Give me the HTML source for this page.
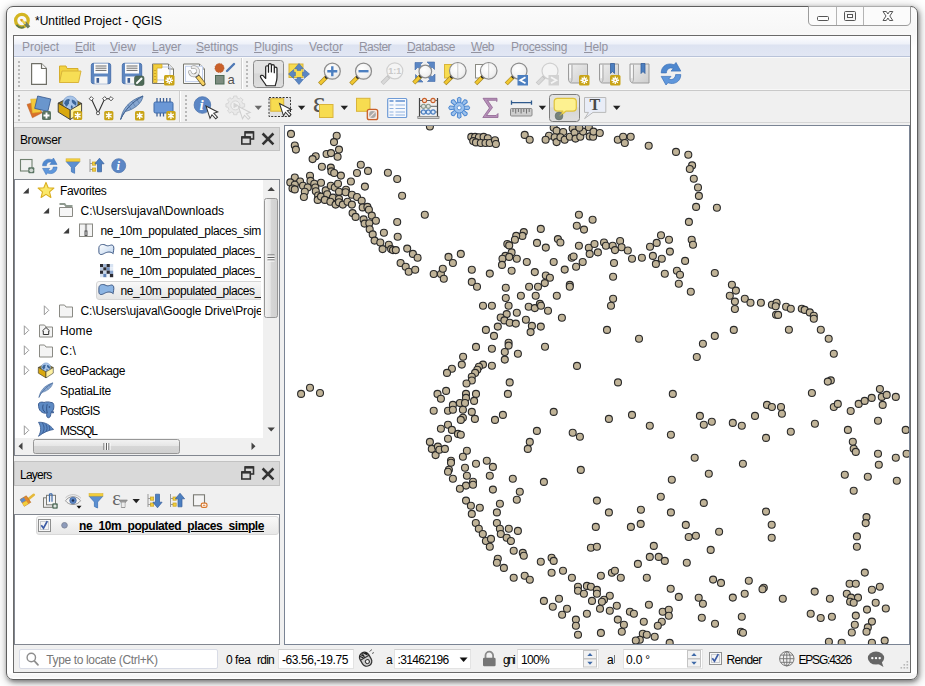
<!DOCTYPE html>
<html>
<head>
<meta charset="utf-8">
<title>*Untitled Project - QGIS</title>
<style>
html,body{margin:0;padding:0;}
body{width:925px;height:686px;background:#fff;overflow:hidden;position:relative;
 font-family:"Liberation Sans",sans-serif;font-size:12px;color:#000;}
.a{position:absolute;}
svg{position:absolute;overflow:visible;}
.t{position:absolute;white-space:nowrap;}
u{text-decoration:underline;text-underline-offset:1px;}

#win{position:absolute;left:6px;top:6px;width:910px;height:672px;border:1px solid #5e5e5e;border-radius:7px;
 background:linear-gradient(180deg,#fbfbfb 0,#f7f7f7 24px,#ffffff 40px,#ffffff 666px,#f4f4f4 669px,#ffffff 672px);
 box-shadow:0 0 0 1px rgba(255,255,255,.6) inset, 1px 2px 4px rgba(0,0,0,.38), 1px 2px 11px rgba(0,0,0,.33);}
#client{position:absolute;left:13px;top:35px;width:896px;height:636px;border:1px solid #6a6a6a;background:#f0f0f0;}
#menubar{position:absolute;left:14px;top:36px;width:896px;height:20px;
 background:linear-gradient(180deg,#fdfdfe 0,#eef1f9 40%,#dde3f1 45%,#e2e7f4 100%);border-bottom:1px solid #b9c3d9;}
.dock{position:absolute;background:#d9d9d9;border:1px solid #c2c2c2;box-sizing:border-box;}
.box{position:absolute;background:#fff;border:1px solid #828790;box-sizing:border-box;}
.inp{position:absolute;background:#fff;border:1px solid #e3e3e3;border-top-color:#d0d0d0;box-sizing:border-box;}
.hl{position:absolute;height:1px;}
.vl{position:absolute;width:1px;}
.grip{position:absolute;width:2px;background:repeating-linear-gradient(180deg,#b9b9b9 0,#b9b9b9 2px,transparent 2px,transparent 4px);}

#dots{overflow:hidden}
</style>
</head>
<body>
<div id="win"></div><div id="client"></div>
<span class="t" id="t0" style="left:35px;top:14.44px;font-size:12px;line-height:14px;color:#000;letter-spacing:0.012px;">*Untitled Project - QGIS</span>
<div id="menubar"></div>
<div class="a" style="left:549px;top:94px;width:31px;height:28px;box-sizing:border-box;border:1px solid #7c7c7c;border-radius:3.5px;background:linear-gradient(180deg,#e3e3e3 0,#e0e0e0 45%,#d6d6d6 50%,#dedede 100%)"></div>
<div class="a" style="left:253px;top:60px;width:31px;height:28px;box-sizing:border-box;border:1px solid #8b8b8b;border-radius:3.5px;background:linear-gradient(180deg,#e3e3e3 0,#e0e0e0 45%,#d6d6d6 50%,#dedede 100%)"></div>
<span class="t" id="t1" style="left:22px;top:40.04px;font-size:12px;line-height:14px;color:#9393a0;letter-spacing:-0.054px;">Pro<u>j</u>ect</span>
<span class="t" id="t2" style="left:75px;top:40.04px;font-size:12px;line-height:14px;color:#9393a0;letter-spacing:-0.176px;"><u>E</u>dit</span>
<span class="t" id="t3" style="left:110px;top:40.04px;font-size:12px;line-height:14px;color:#9393a0;letter-spacing:0.047px;"><u>V</u>iew</span>
<span class="t" id="t4" style="left:152px;top:40.04px;font-size:12px;line-height:14px;color:#9393a0;letter-spacing:-0.206px;"><u>L</u>ayer</span>
<span class="t" id="t5" style="left:196px;top:40.04px;font-size:12px;line-height:14px;color:#9393a0;letter-spacing:-0.172px;"><u>S</u>ettings</span>
<span class="t" id="t6" style="left:254px;top:40.04px;font-size:12px;line-height:14px;color:#9393a0;letter-spacing:-0.054px;"><u>P</u>lugins</span>
<span class="t" id="t7" style="left:309px;top:40.04px;font-size:12px;line-height:14px;color:#9393a0;letter-spacing:-0.008px;">Vect<u>o</u>r</span>
<span class="t" id="t8" style="left:359px;top:40.04px;font-size:12px;line-height:14px;color:#9393a0;letter-spacing:-0.560px;"><u>R</u>aster</span>
<span class="t" id="t9" style="left:407px;top:40.04px;font-size:12px;line-height:14px;color:#9393a0;letter-spacing:-0.422px;"><u>D</u>atabase</span>
<span class="t" id="t10" style="left:471px;top:40.04px;font-size:12px;line-height:14px;color:#9393a0;letter-spacing:-0.490px;"><u>W</u>eb</span>
<span class="t" id="t11" style="left:511px;top:40.04px;font-size:12px;line-height:14px;color:#9393a0;letter-spacing:-0.338px;">Pro<u>c</u>essing</span>
<span class="t" id="t12" style="left:584px;top:40.04px;font-size:12px;line-height:14px;color:#9393a0;letter-spacing:-0.172px;"><u>H</u>elp</span>
<div class="hl" style="left:14px;top:57px;width:896px;background:#fafafa"></div>
<div class="hl" style="left:14px;top:89px;width:896px;background:#f8f8f8"></div>
<div class="hl" style="left:14px;top:90px;width:896px;background:#c9c9c9"></div>
<div class="hl" style="left:14px;top:122px;width:896px;background:#d6d6d6"></div>
<div class="grip" style="left:18px;top:61px;height:26px"></div>
<div class="grip" style="left:246px;top:61px;height:26px"></div>
<div class="grip" style="left:18px;top:95px;height:26px"></div>
<div class="grip" style="left:185px;top:95px;height:26px"></div>
<div class="vl" style="left:241px;top:58px;height:31px;background:#cfcfcf"></div><div class="vl" style="left:242px;top:58px;height:31px;background:#fff"></div>
<div class="vl" style="left:179px;top:91px;height:31px;background:#cfcfcf"></div><div class="vl" style="left:180px;top:91px;height:31px;background:#fff"></div>
<div class="dock" style="left:14px;top:127px;width:266px;height:24px"></div>
<span class="t" id="t13" style="left:20px;top:133.44px;font-size:12px;line-height:14px;color:#000;letter-spacing:-0.431px;">Browser</span>
<div class="box" style="left:14px;top:179px;width:266px;height:277px"></div>
<div class="dock" style="left:14px;top:461px;width:266px;height:25px"></div>
<span class="t" id="t14" style="left:20px;top:468.44px;font-size:12px;line-height:14px;color:#000;letter-spacing:-0.755px;">Layers</span>
<div class="box" style="left:14px;top:514px;width:266px;height:131px"></div>
<div class="a" style="left:15px;top:180px;width:246px;height:258px;overflow:hidden">
<div class="a" style="left:81px;top:101px;width:190px;height:19px;border:1px solid #d6d6d6;border-radius:3px;background:linear-gradient(180deg,#f8f8f8,#e6e6e6);box-sizing:border-box"></div>
<span class="t" id="t15" style="left:45px;top:3.94px;font-size:12px;line-height:14px;color:#000;letter-spacing:-0.318px;">Favorites</span>
<span class="t" id="t16" style="left:65.5px;top:23.94px;font-size:12px;line-height:14px;color:#000;letter-spacing:-0.022px;">C:\Users\ujaval\Downloads</span>
<span class="t" id="t17" style="left:85.5px;top:43.94px;font-size:12px;line-height:14px;color:#000;letter-spacing:-0.332px;">ne_10m_populated_places_simple</span>
<span class="t" id="t18" style="left:105.5px;top:63.94px;font-size:12px;line-height:14px;color:#000;letter-spacing:-0.433px;">ne_10m_populated_places_simple.shp</span>
<span class="t" id="t19" style="left:105.5px;top:83.94px;font-size:12px;line-height:14px;color:#000;letter-spacing:-0.433px;">ne_10m_populated_places_simple.tif</span>
<span class="t" id="t20" style="left:105.5px;top:103.94px;font-size:12px;line-height:14px;color:#000;letter-spacing:-0.433px;">ne_10m_populated_places_simple.gpkg</span>
<span class="t" id="t21" style="left:65.5px;top:123.94px;font-size:12px;line-height:14px;color:#000;letter-spacing:-0.118px;">C:\Users\ujaval\Google Drive\Projects</span>
<span class="t" id="t22" style="left:45px;top:143.94px;font-size:12px;line-height:14px;color:#000;letter-spacing:0.121px;">Home</span>
<span class="t" id="t23" style="left:45px;top:163.94px;font-size:12px;line-height:14px;color:#000;letter-spacing:0.219px;">C:\</span>
<span class="t" id="t24" style="left:45px;top:183.94px;font-size:12px;line-height:14px;color:#000;letter-spacing:-0.439px;">GeoPackage</span>
<span class="t" id="t25" style="left:45px;top:203.94px;font-size:12px;line-height:14px;color:#000;letter-spacing:-0.237px;">SpatiaLite</span>
<span class="t" id="t26" style="left:45px;top:223.94px;font-size:12px;line-height:14px;color:#000;letter-spacing:-0.741px;">PostGIS</span>
<span class="t" id="t27" style="left:45px;top:243.94px;font-size:12px;line-height:14px;color:#000;letter-spacing:-1.003px;">MSSQL</span>
</div>
<div class="a" style="left:36px;top:516px;width:243px;height:19px;border:1px solid #d9d9d9;border-radius:3px;background:linear-gradient(180deg,#f9f9f9,#e8e8e8);box-sizing:border-box"></div>
<span class="t" id="t28" style="left:79px;top:519.44px;font-size:12px;line-height:14px;color:#000;font-weight:bold;letter-spacing:-0.414px;"><u>ne_10m_populated_places_simple</u></span>
<div class="box" id="map" style="left:284px;top:125px;width:626px;height:520px;border-color:#7a8494"></div>
<div class="inp" style="left:19px;top:649px;width:199px;height:20px;border-color:#d9dce6;border-radius:2px"></div>
<span class="t" id="t29" style="left:46.3px;top:653.44px;font-size:12px;line-height:14px;color:#777;letter-spacing:-0.366px;">Type to locate (Ctrl+K)</span>
<span class="t" id="t30" style="left:226px;top:653.44px;font-size:12px;line-height:14px;color:#000;letter-spacing:-0.470px;">0&nbsp;fea</span>
<span class="t" id="t31" style="left:257px;top:653.44px;font-size:12px;line-height:14px;color:#000;letter-spacing:-0.754px;">rdin</span>
<div class="inp" style="left:278px;top:649px;width:76px;height:20px"></div>
<span class="t" id="t32" style="left:282px;top:653.44px;font-size:12px;line-height:14px;color:#000;letter-spacing:-0.415px;">-63.56,-19.75</span>
<span class="t" id="t33" style="left:386px;top:653.44px;font-size:12px;line-height:14px;color:#000;letter-spacing:-0.688px;">a</span>
<div class="inp" style="left:394px;top:649px;width:77px;height:20px"></div>
<span class="t" id="t34" style="left:397.5px;top:653.44px;font-size:12px;line-height:14px;color:#000;letter-spacing:-0.637px;">:31462196</span>
<span class="t" id="t35" style="left:503px;top:653.44px;font-size:12px;line-height:14px;color:#000;letter-spacing:-1.672px;">gni</span>
<div class="inp" style="left:517px;top:649px;width:82px;height:20px"></div>
<span class="t" id="t36" style="left:521px;top:653.44px;font-size:12px;line-height:14px;color:#000;letter-spacing:-0.676px;">100%</span>
<span class="t" id="t37" style="left:607px;top:653.44px;font-size:12px;line-height:14px;color:#000;letter-spacing:-0.688px;">a</span>
<div class="vl" style="left:614px;top:655px;height:8px;background:#777"></div>
<div class="inp" style="left:623px;top:649px;width:80px;height:20px"></div>
<span class="t" id="t38" style="left:626px;top:653.44px;font-size:12px;line-height:14px;color:#000;letter-spacing:-0.166px;">0.0 °</span>
<span class="t" id="t39" style="left:726.6px;top:653.44px;font-size:12px;line-height:14px;color:#000;letter-spacing:-0.727px;">Render</span>
<span class="t" id="t40" style="left:798.5px;top:653.44px;font-size:12px;line-height:14px;color:#000;letter-spacing:-1.208px;">EPSG:4326</span>
<span class="t" id="t44" style="left:312.8px;top:86.85px;font-size:29px;line-height:31px;color:#555;font-family:'Liberation Serif',serif;">ε</span>
<svg id="dots" style="left:285px;top:126px" width="624" height="518" viewBox="285 126 624 518"><g fill="#c0b397" stroke="#2a2a2a" stroke-width="1.1"><circle cx="291.0" cy="133.9" r="3.5"/><circle cx="294.8" cy="145.5" r="3.5"/><circle cx="295.9" cy="149.6" r="3.5"/><circle cx="336.7" cy="135.8" r="3.5"/><circle cx="334.0" cy="142.1" r="3.5"/><circle cx="339.0" cy="149.6" r="3.5"/><circle cx="326.6" cy="154.0" r="3.5"/><circle cx="331.0" cy="153.1" r="3.5"/><circle cx="337.6" cy="156.8" r="3.5"/><circle cx="315.7" cy="156.3" r="3.5"/><circle cx="312.6" cy="159.1" r="3.5"/><circle cx="321.9" cy="166.7" r="3.5"/><circle cx="330.8" cy="167.6" r="3.5"/><circle cx="331.4" cy="171.4" r="3.5"/><circle cx="334.2" cy="173.0" r="3.5"/><circle cx="340.9" cy="175.6" r="3.5"/><circle cx="360.8" cy="164.8" r="3.5"/><circle cx="357.0" cy="173.0" r="3.5"/><circle cx="368.0" cy="170.9" r="3.5"/><circle cx="387.9" cy="172.8" r="3.5"/><circle cx="397.2" cy="179.0" r="3.5"/><circle cx="350.9" cy="181.5" r="3.5"/><circle cx="364.9" cy="186.6" r="3.5"/><circle cx="402.1" cy="195.7" r="3.5"/><circle cx="424.8" cy="214.7" r="3.5"/><circle cx="429.9" cy="126.5" r="3.5"/><circle cx="294.8" cy="177.5" r="3.5"/><circle cx="290.3" cy="182.4" r="3.5"/><circle cx="300.1" cy="181.5" r="3.5"/><circle cx="294.8" cy="184.7" r="3.5"/><circle cx="292.5" cy="188.5" r="3.5"/><circle cx="294.8" cy="189.4" r="3.5"/><circle cx="303.0" cy="185.7" r="3.5"/><circle cx="310.0" cy="175.8" r="3.5"/><circle cx="310.5" cy="180.9" r="3.5"/><circle cx="307.7" cy="187.5" r="3.5"/><circle cx="304.8" cy="191.7" r="3.5"/><circle cx="303.9" cy="197.0" r="3.5"/><circle cx="314.3" cy="183.8" r="3.5"/><circle cx="321.0" cy="182.8" r="3.5"/><circle cx="315.3" cy="187.5" r="3.5"/><circle cx="315.8" cy="191.3" r="3.5"/><circle cx="318.1" cy="195.5" r="3.5"/><circle cx="317.7" cy="199.9" r="3.5"/><circle cx="321.0" cy="196.6" r="3.5"/><circle cx="325.7" cy="190.4" r="3.5"/><circle cx="327.2" cy="194.2" r="3.5"/><circle cx="324.8" cy="199.9" r="3.5"/><circle cx="330.8" cy="185.7" r="3.5"/><circle cx="334.8" cy="187.5" r="3.5"/><circle cx="338.0" cy="183.8" r="3.5"/><circle cx="339.0" cy="191.7" r="3.5"/><circle cx="332.9" cy="197.6" r="3.5"/><circle cx="330.4" cy="201.8" r="3.5"/><circle cx="339.0" cy="198.9" r="3.5"/><circle cx="335.6" cy="204.6" r="3.5"/><circle cx="339.0" cy="202.3" r="3.5"/><circle cx="342.8" cy="204.6" r="3.5"/><circle cx="346.0" cy="189.8" r="3.5"/><circle cx="345.6" cy="192.3" r="3.5"/><circle cx="351.9" cy="194.7" r="3.5"/><circle cx="357.0" cy="197.0" r="3.5"/><circle cx="347.5" cy="201.8" r="3.5"/><circle cx="351.9" cy="204.6" r="3.5"/><circle cx="361.7" cy="200.8" r="3.5"/><circle cx="362.7" cy="207.4" r="3.5"/><circle cx="367.4" cy="206.9" r="3.5"/><circle cx="368.9" cy="209.7" r="3.5"/><circle cx="352.6" cy="213.1" r="3.5"/><circle cx="355.6" cy="216.9" r="3.5"/><circle cx="371.8" cy="215.6" r="3.5"/><circle cx="375.9" cy="220.7" r="3.5"/><circle cx="363.6" cy="219.4" r="3.5"/><circle cx="364.6" cy="223.6" r="3.5"/><circle cx="369.3" cy="223.2" r="3.5"/><circle cx="369.7" cy="229.2" r="3.5"/><circle cx="372.7" cy="234.4" r="3.5"/><circle cx="374.6" cy="240.6" r="3.5"/><circle cx="380.3" cy="242.5" r="3.5"/><circle cx="382.6" cy="249.1" r="3.5"/><circle cx="388.8" cy="244.8" r="3.5"/><circle cx="391.1" cy="249.1" r="3.5"/><circle cx="393.0" cy="250.1" r="3.5"/><circle cx="395.8" cy="250.1" r="3.5"/><circle cx="383.9" cy="232.7" r="3.5"/><circle cx="397.2" cy="222.0" r="3.5"/><circle cx="397.7" cy="236.8" r="3.5"/><circle cx="407.2" cy="248.6" r="3.5"/><circle cx="412.9" cy="253.9" r="3.5"/><circle cx="417.6" cy="257.8" r="3.5"/><circle cx="471.3" cy="136.9" r="3.5"/><circle cx="475.1" cy="136.9" r="3.5"/><circle cx="478.9" cy="137.3" r="3.5"/><circle cx="483.6" cy="136.9" r="3.5"/><circle cx="487.8" cy="138.3" r="3.5"/><circle cx="473.2" cy="141.1" r="3.5"/><circle cx="476.0" cy="142.4" r="3.5"/><circle cx="480.8" cy="143.0" r="3.5"/><circle cx="485.5" cy="143.0" r="3.5"/><circle cx="489.7" cy="143.0" r="3.5"/><circle cx="495.0" cy="140.2" r="3.5"/><circle cx="495.9" cy="144.0" r="3.5"/><circle cx="524.7" cy="134.9" r="3.5"/><circle cx="529.7" cy="139.8" r="3.5"/><circle cx="549.0" cy="135.8" r="3.5"/><circle cx="545.6" cy="139.8" r="3.5"/><circle cx="553.7" cy="127.8" r="3.5"/><circle cx="556.6" cy="130.7" r="3.5"/><circle cx="563.2" cy="132.0" r="3.5"/><circle cx="554.7" cy="137.3" r="3.5"/><circle cx="556.6" cy="142.1" r="3.5"/><circle cx="560.4" cy="137.3" r="3.5"/><circle cx="564.7" cy="139.8" r="3.5"/><circle cx="569.8" cy="136.8" r="3.5"/><circle cx="572.7" cy="128.4" r="3.5"/><circle cx="574.6" cy="132.6" r="3.5"/><circle cx="575.5" cy="138.6" r="3.5"/><circle cx="580.3" cy="136.8" r="3.5"/><circle cx="583.1" cy="131.6" r="3.5"/><circle cx="588.8" cy="127.3" r="3.5"/><circle cx="589.7" cy="136.4" r="3.5"/><circle cx="593.1" cy="136.8" r="3.5"/><circle cx="579.3" cy="127.8" r="3.5"/><circle cx="593.5" cy="131.6" r="3.5"/><circle cx="578.9" cy="214.7" r="3.5"/><circle cx="592.6" cy="219.8" r="3.5"/><circle cx="576.8" cy="225.8" r="3.5"/><circle cx="584.0" cy="229.6" r="3.5"/><circle cx="540.8" cy="228.9" r="3.5"/><circle cx="523.8" cy="232.1" r="3.5"/><circle cx="522.4" cy="235.9" r="3.5"/><circle cx="516.2" cy="235.9" r="3.5"/><circle cx="514.9" cy="239.7" r="3.5"/><circle cx="507.3" cy="244.0" r="3.5"/><circle cx="509.2" cy="245.4" r="3.5"/><circle cx="537.0" cy="242.9" r="3.5"/><circle cx="545.8" cy="247.6" r="3.5"/><circle cx="557.9" cy="239.1" r="3.5"/><circle cx="560.4" cy="242.5" r="3.5"/><circle cx="578.9" cy="245.7" r="3.5"/><circle cx="588.8" cy="247.8" r="3.5"/><circle cx="594.5" cy="244.0" r="3.5"/><circle cx="460.8" cy="253.9" r="3.5"/><circle cx="448.5" cy="256.9" r="3.5"/><circle cx="505.4" cy="255.9" r="3.5"/><circle cx="511.6" cy="252.4" r="3.5"/><circle cx="571.7" cy="257.8" r="3.5"/><circle cx="589.7" cy="253.9" r="3.5"/><circle cx="599.8" cy="133.0" r="3.5"/><circle cx="617.8" cy="139.8" r="3.5"/><circle cx="623.1" cy="136.8" r="3.5"/><circle cx="630.7" cy="136.8" r="3.5"/><circle cx="624.8" cy="143.0" r="3.5"/><circle cx="648.7" cy="145.8" r="3.5"/><circle cx="676.0" cy="151.9" r="3.5"/><circle cx="688.3" cy="154.8" r="3.5"/><circle cx="692.1" cy="165.4" r="3.5"/><circle cx="689.8" cy="169.0" r="3.5"/><circle cx="693.8" cy="178.8" r="3.5"/><circle cx="698.0" cy="187.5" r="3.5"/><circle cx="698.9" cy="195.9" r="3.5"/><circle cx="696.1" cy="206.9" r="3.5"/><circle cx="716.9" cy="207.8" r="3.5"/><circle cx="688.9" cy="221.9" r="3.5"/><circle cx="661.0" cy="235.3" r="3.5"/><circle cx="669.0" cy="239.7" r="3.5"/><circle cx="656.7" cy="242.9" r="3.5"/><circle cx="650.0" cy="246.7" r="3.5"/><circle cx="691.7" cy="239.7" r="3.5"/><circle cx="693.0" cy="244.8" r="3.5"/><circle cx="669.9" cy="251.6" r="3.5"/><circle cx="652.9" cy="255.9" r="3.5"/><circle cx="641.9" cy="257.8" r="3.5"/><circle cx="604.0" cy="242.5" r="3.5"/><circle cx="605.9" cy="245.7" r="3.5"/><circle cx="612.7" cy="245.7" r="3.5"/><circle cx="620.1" cy="241.0" r="3.5"/><circle cx="621.6" cy="247.3" r="3.5"/><circle cx="615.0" cy="250.1" r="3.5"/><circle cx="627.8" cy="250.5" r="3.5"/><circle cx="597.9" cy="252.4" r="3.5"/><circle cx="400.6" cy="263.0" r="3.5"/><circle cx="405.7" cy="266.8" r="3.5"/><circle cx="408.7" cy="271.7" r="3.5"/><circle cx="415.2" cy="269.8" r="3.5"/><circle cx="433.7" cy="274.0" r="3.5"/><circle cx="440.9" cy="274.0" r="3.5"/><circle cx="442.8" cy="268.8" r="3.5"/><circle cx="310.0" cy="387.8" r="3.5"/><circle cx="452.9" cy="263.0" r="3.5"/><circle cx="443.8" cy="278.7" r="3.5"/><circle cx="471.8" cy="269.8" r="3.5"/><circle cx="489.8" cy="273.6" r="3.5"/><circle cx="471.8" cy="281.9" r="3.5"/><circle cx="477.0" cy="286.8" r="3.5"/><circle cx="502.5" cy="258.8" r="3.5"/><circle cx="509.2" cy="256.9" r="3.5"/><circle cx="516.8" cy="258.8" r="3.5"/><circle cx="502.0" cy="264.9" r="3.5"/><circle cx="526.8" cy="262.0" r="3.5"/><circle cx="511.6" cy="270.7" r="3.5"/><circle cx="534.8" cy="272.1" r="3.5"/><circle cx="553.7" cy="262.0" r="3.5"/><circle cx="564.7" cy="269.6" r="3.5"/><circle cx="573.6" cy="256.5" r="3.5"/><circle cx="576.1" cy="266.8" r="3.5"/><circle cx="582.7" cy="262.0" r="3.5"/><circle cx="545.8" cy="275.5" r="3.5"/><circle cx="549.9" cy="277.7" r="3.5"/><circle cx="544.8" cy="283.1" r="3.5"/><circle cx="529.1" cy="286.8" r="3.5"/><circle cx="538.0" cy="286.8" r="3.5"/><circle cx="569.8" cy="284.9" r="3.5"/><circle cx="569.8" cy="286.8" r="3.5"/><circle cx="505.8" cy="287.8" r="3.5"/><circle cx="520.9" cy="295.8" r="3.5"/><circle cx="535.7" cy="295.8" r="3.5"/><circle cx="556.8" cy="295.8" r="3.5"/><circle cx="505.8" cy="298.0" r="3.5"/><circle cx="483.0" cy="305.8" r="3.5"/><circle cx="491.9" cy="305.8" r="3.5"/><circle cx="508.6" cy="305.8" r="3.5"/><circle cx="528.7" cy="306.7" r="3.5"/><circle cx="534.8" cy="308.1" r="3.5"/><circle cx="539.9" cy="303.9" r="3.5"/><circle cx="541.0" cy="305.8" r="3.5"/><circle cx="548.0" cy="310.7" r="3.5"/><circle cx="516.8" cy="312.8" r="3.5"/><circle cx="506.7" cy="314.1" r="3.5"/><circle cx="500.7" cy="317.5" r="3.5"/><circle cx="504.4" cy="320.4" r="3.5"/><circle cx="509.7" cy="322.7" r="3.5"/><circle cx="515.8" cy="323.6" r="3.5"/><circle cx="525.9" cy="319.8" r="3.5"/><circle cx="531.9" cy="325.9" r="3.5"/><circle cx="540.8" cy="326.6" r="3.5"/><circle cx="561.9" cy="317.7" r="3.5"/><circle cx="530.6" cy="332.1" r="3.5"/><circle cx="497.8" cy="326.6" r="3.5"/><circle cx="485.9" cy="329.9" r="3.5"/><circle cx="494.0" cy="335.9" r="3.5"/><circle cx="508.6" cy="342.8" r="3.5"/><circle cx="508.6" cy="345.6" r="3.5"/><circle cx="476.0" cy="346.9" r="3.5"/><circle cx="491.9" cy="348.8" r="3.5"/><circle cx="504.8" cy="352.0" r="3.5"/><circle cx="517.9" cy="353.7" r="3.5"/><circle cx="545.0" cy="346.7" r="3.5"/><circle cx="504.8" cy="359.6" r="3.5"/><circle cx="463.1" cy="356.8" r="3.5"/><circle cx="461.8" cy="364.6" r="3.5"/><circle cx="483.0" cy="364.6" r="3.5"/><circle cx="491.9" cy="365.7" r="3.5"/><circle cx="478.9" cy="366.8" r="3.5"/><circle cx="477.3" cy="369.7" r="3.5"/><circle cx="475.1" cy="372.9" r="3.5"/><circle cx="471.8" cy="376.7" r="3.5"/><circle cx="471.8" cy="380.5" r="3.5"/><circle cx="466.5" cy="383.5" r="3.5"/><circle cx="451.9" cy="368.7" r="3.5"/><circle cx="447.0" cy="372.9" r="3.5"/><circle cx="577.0" cy="365.9" r="3.5"/><circle cx="509.7" cy="382.4" r="3.5"/><circle cx="614.0" cy="263.0" r="3.5"/><circle cx="632.0" cy="258.8" r="3.5"/><circle cx="661.8" cy="258.8" r="3.5"/><circle cx="655.9" cy="263.9" r="3.5"/><circle cx="685.1" cy="260.9" r="3.5"/><circle cx="613.1" cy="276.8" r="3.5"/><circle cx="664.8" cy="273.8" r="3.5"/><circle cx="676.9" cy="270.7" r="3.5"/><circle cx="680.0" cy="274.7" r="3.5"/><circle cx="678.8" cy="283.8" r="3.5"/><circle cx="690.8" cy="291.8" r="3.5"/><circle cx="714.8" cy="273.0" r="3.5"/><circle cx="731.9" cy="284.8" r="3.5"/><circle cx="735.9" cy="290.6" r="3.5"/><circle cx="729.8" cy="295.8" r="3.5"/><circle cx="734.9" cy="301.6" r="3.5"/><circle cx="734.9" cy="309.0" r="3.5"/><circle cx="744.8" cy="298.8" r="3.5"/><circle cx="750.5" cy="302.8" r="3.5"/><circle cx="613.1" cy="298.8" r="3.5"/><circle cx="611.0" cy="305.8" r="3.5"/><circle cx="607.0" cy="329.9" r="3.5"/><circle cx="639.0" cy="338.8" r="3.5"/><circle cx="733.8" cy="329.9" r="3.5"/><circle cx="714.8" cy="335.9" r="3.5"/><circle cx="702.9" cy="343.7" r="3.5"/><circle cx="696.8" cy="357.0" r="3.5"/><circle cx="618.0" cy="382.4" r="3.5"/><circle cx="760.9" cy="302.7" r="3.5"/><circle cx="771.9" cy="304.8" r="3.5"/><circle cx="776.6" cy="302.7" r="3.5"/><circle cx="775.7" cy="306.2" r="3.5"/><circle cx="776.1" cy="314.7" r="3.5"/><circle cx="778.1" cy="314.9" r="3.5"/><circle cx="786.1" cy="306.7" r="3.5"/><circle cx="790.8" cy="308.8" r="3.5"/><circle cx="801.8" cy="308.8" r="3.5"/><circle cx="804.7" cy="309.9" r="3.5"/><circle cx="809.8" cy="312.4" r="3.5"/><circle cx="813.8" cy="315.8" r="3.5"/><circle cx="813.8" cy="318.8" r="3.5"/><circle cx="788.9" cy="329.8" r="3.5"/><circle cx="820.8" cy="329.8" r="3.5"/><circle cx="828.7" cy="338.7" r="3.5"/><circle cx="833.8" cy="353.7" r="3.5"/><circle cx="830.8" cy="380.4" r="3.5"/><circle cx="827.8" cy="381.6" r="3.5"/><circle cx="879.9" cy="389.0" r="3.5"/><circle cx="301.1" cy="393.9" r="3.5"/><circle cx="320.0" cy="393.0" r="3.5"/><circle cx="437.5" cy="393.9" r="3.5"/><circle cx="440.9" cy="398.8" r="3.5"/><circle cx="433.7" cy="410.8" r="3.5"/><circle cx="440.9" cy="428.8" r="3.5"/><circle cx="429.9" cy="441.9" r="3.5"/><circle cx="431.8" cy="448.9" r="3.5"/><circle cx="435.6" cy="455.1" r="3.5"/><circle cx="437.9" cy="446.6" r="3.5"/><circle cx="439.4" cy="449.8" r="3.5"/><circle cx="446.1" cy="390.9" r="3.5"/><circle cx="466.0" cy="393.9" r="3.5"/><circle cx="476.0" cy="393.9" r="3.5"/><circle cx="466.0" cy="397.9" r="3.5"/><circle cx="474.1" cy="400.9" r="3.5"/><circle cx="459.9" cy="403.0" r="3.5"/><circle cx="465.0" cy="403.0" r="3.5"/><circle cx="452.9" cy="404.9" r="3.5"/><circle cx="448.0" cy="410.8" r="3.5"/><circle cx="452.9" cy="409.8" r="3.5"/><circle cx="462.9" cy="409.8" r="3.5"/><circle cx="471.8" cy="411.9" r="3.5"/><circle cx="462.9" cy="417.8" r="3.5"/><circle cx="460.8" cy="419.9" r="3.5"/><circle cx="474.9" cy="418.9" r="3.5"/><circle cx="448.0" cy="424.8" r="3.5"/><circle cx="451.9" cy="429.9" r="3.5"/><circle cx="458.0" cy="433.9" r="3.5"/><circle cx="460.8" cy="434.8" r="3.5"/><circle cx="448.0" cy="438.8" r="3.5"/><circle cx="444.9" cy="448.9" r="3.5"/><circle cx="466.9" cy="450.8" r="3.5"/><circle cx="462.9" cy="456.8" r="3.5"/><circle cx="451.0" cy="460.8" r="3.5"/><circle cx="451.0" cy="462.7" r="3.5"/><circle cx="448.9" cy="469.7" r="3.5"/><circle cx="448.0" cy="471.8" r="3.5"/><circle cx="452.9" cy="478.8" r="3.5"/><circle cx="476.0" cy="463.8" r="3.5"/><circle cx="465.0" cy="467.8" r="3.5"/><circle cx="466.9" cy="475.8" r="3.5"/><circle cx="486.8" cy="460.8" r="3.5"/><circle cx="492.9" cy="466.9" r="3.5"/><circle cx="489.8" cy="475.8" r="3.5"/><circle cx="473.0" cy="481.7" r="3.5"/><circle cx="473.0" cy="484.7" r="3.5"/><circle cx="466.0" cy="485.6" r="3.5"/><circle cx="459.9" cy="488.7" r="3.5"/><circle cx="492.9" cy="489.6" r="3.5"/><circle cx="466.0" cy="500.6" r="3.5"/><circle cx="470.9" cy="505.7" r="3.5"/><circle cx="479.8" cy="507.8" r="3.5"/><circle cx="499.9" cy="503.8" r="3.5"/><circle cx="471.8" cy="513.9" r="3.5"/><circle cx="496.9" cy="512.4" r="3.5"/><circle cx="512.8" cy="478.8" r="3.5"/><circle cx="519.8" cy="491.7" r="3.5"/><circle cx="516.8" cy="499.7" r="3.5"/><circle cx="543.9" cy="481.9" r="3.5"/><circle cx="580.8" cy="469.9" r="3.5"/><circle cx="527.8" cy="448.9" r="3.5"/><circle cx="529.8" cy="441.9" r="3.5"/><circle cx="536.9" cy="430.9" r="3.5"/><circle cx="495.0" cy="419.9" r="3.5"/><circle cx="502.9" cy="414.9" r="3.5"/><circle cx="507.9" cy="393.9" r="3.5"/><circle cx="553.7" cy="411.9" r="3.5"/><circle cx="572.7" cy="432.8" r="3.5"/><circle cx="579.9" cy="436.7" r="3.5"/><circle cx="596.9" cy="500.6" r="3.5"/><circle cx="672.8" cy="393.9" r="3.5"/><circle cx="608.9" cy="418.9" r="3.5"/><circle cx="632.0" cy="414.9" r="3.5"/><circle cx="649.8" cy="425.8" r="3.5"/><circle cx="670.9" cy="434.8" r="3.5"/><circle cx="699.9" cy="415.9" r="3.5"/><circle cx="703.8" cy="424.8" r="3.5"/><circle cx="711.8" cy="421.8" r="3.5"/><circle cx="732.8" cy="422.9" r="3.5"/><circle cx="741.8" cy="425.8" r="3.5"/><circle cx="755.0" cy="415.9" r="3.5"/><circle cx="694.7" cy="457.8" r="3.5"/><circle cx="742.9" cy="463.8" r="3.5"/><circle cx="708.8" cy="473.7" r="3.5"/><circle cx="671.8" cy="479.8" r="3.5"/><circle cx="660.8" cy="496.8" r="3.5"/><circle cx="703.8" cy="502.9" r="3.5"/><circle cx="608.9" cy="512.4" r="3.5"/><circle cx="640.9" cy="509.7" r="3.5"/><circle cx="670.9" cy="512.4" r="3.5"/><circle cx="811.9" cy="393.0" r="3.5"/><circle cx="767.0" cy="404.9" r="3.5"/><circle cx="771.9" cy="407.0" r="3.5"/><circle cx="781.0" cy="407.0" r="3.5"/><circle cx="781.9" cy="413.8" r="3.5"/><circle cx="814.9" cy="423.8" r="3.5"/><circle cx="790.8" cy="431.8" r="3.5"/><circle cx="766.0" cy="437.9" r="3.5"/><circle cx="833.8" cy="407.0" r="3.5"/><circle cx="837.8" cy="403.9" r="3.5"/><circle cx="850.7" cy="411.0" r="3.5"/><circle cx="858.7" cy="403.9" r="3.5"/><circle cx="864.7" cy="400.9" r="3.5"/><circle cx="871.7" cy="397.9" r="3.5"/><circle cx="881.8" cy="396.9" r="3.5"/><circle cx="886.7" cy="394.9" r="3.5"/><circle cx="895.8" cy="396.9" r="3.5"/><circle cx="882.7" cy="404.9" r="3.5"/><circle cx="878.0" cy="420.8" r="3.5"/><circle cx="847.9" cy="429.9" r="3.5"/><circle cx="905.7" cy="429.9" r="3.5"/><circle cx="852.8" cy="441.8" r="3.5"/><circle cx="853.7" cy="448.8" r="3.5"/><circle cx="855.8" cy="451.9" r="3.5"/><circle cx="878.0" cy="453.8" r="3.5"/><circle cx="895.8" cy="457.8" r="3.5"/><circle cx="906.6" cy="453.8" r="3.5"/><circle cx="878.8" cy="464.8" r="3.5"/><circle cx="844.8" cy="474.8" r="3.5"/><circle cx="867.8" cy="476.7" r="3.5"/><circle cx="896.8" cy="480.7" r="3.5"/><circle cx="853.7" cy="490.7" r="3.5"/><circle cx="766.0" cy="511.6" r="3.5"/><circle cx="866.5" cy="517.1" r="3.5"/><circle cx="475.8" cy="523.0" r="3.5"/><circle cx="478.8" cy="528.8" r="3.5"/><circle cx="482.8" cy="534.0" r="3.5"/><circle cx="485.9" cy="541.0" r="3.5"/><circle cx="491.0" cy="538.9" r="3.5"/><circle cx="489.8" cy="546.8" r="3.5"/><circle cx="496.9" cy="523.0" r="3.5"/><circle cx="499.9" cy="528.8" r="3.5"/><circle cx="500.8" cy="534.0" r="3.5"/><circle cx="508.8" cy="528.8" r="3.5"/><circle cx="517.9" cy="530.9" r="3.5"/><circle cx="506.7" cy="537.7" r="3.5"/><circle cx="510.9" cy="541.0" r="3.5"/><circle cx="513.7" cy="550.8" r="3.5"/><circle cx="522.8" cy="552.9" r="3.5"/><circle cx="523.8" cy="555.8" r="3.5"/><circle cx="497.8" cy="558.8" r="3.5"/><circle cx="496.9" cy="562.8" r="3.5"/><circle cx="503.9" cy="567.9" r="3.5"/><circle cx="513.7" cy="577.7" r="3.5"/><circle cx="524.7" cy="575.8" r="3.5"/><circle cx="529.8" cy="579.8" r="3.5"/><circle cx="540.8" cy="561.8" r="3.5"/><circle cx="551.6" cy="557.8" r="3.5"/><circle cx="553.7" cy="560.9" r="3.5"/><circle cx="551.6" cy="572.8" r="3.5"/><circle cx="543.9" cy="600.9" r="3.5"/><circle cx="552.8" cy="606.7" r="3.5"/><circle cx="559.0" cy="598.8" r="3.5"/><circle cx="595.8" cy="526.9" r="3.5"/><circle cx="630.9" cy="526.9" r="3.5"/><circle cx="640.7" cy="523.9" r="3.5"/><circle cx="685.8" cy="524.9" r="3.5"/><circle cx="688.7" cy="537.0" r="3.5"/><circle cx="695.9" cy="535.8" r="3.5"/><circle cx="590.9" cy="547.8" r="3.5"/><circle cx="596.9" cy="546.8" r="3.5"/><circle cx="653.8" cy="545.9" r="3.5"/><circle cx="649.8" cy="556.9" r="3.5"/><circle cx="658.7" cy="556.9" r="3.5"/><circle cx="664.8" cy="560.9" r="3.5"/><circle cx="637.9" cy="563.9" r="3.5"/><circle cx="686.8" cy="562.8" r="3.5"/><circle cx="710.7" cy="549.9" r="3.5"/><circle cx="563.0" cy="570.7" r="3.5"/><circle cx="571.9" cy="577.7" r="3.5"/><circle cx="600.9" cy="575.8" r="3.5"/><circle cx="611.9" cy="572.8" r="3.5"/><circle cx="614.9" cy="570.7" r="3.5"/><circle cx="620.8" cy="577.7" r="3.5"/><circle cx="646.8" cy="577.7" r="3.5"/><circle cx="713.1" cy="579.6" r="3.5"/><circle cx="578.0" cy="586.8" r="3.5"/><circle cx="578.0" cy="590.8" r="3.5"/><circle cx="586.9" cy="585.9" r="3.5"/><circle cx="590.9" cy="586.8" r="3.5"/><circle cx="596.9" cy="589.9" r="3.5"/><circle cx="596.9" cy="593.8" r="3.5"/><circle cx="583.9" cy="593.8" r="3.5"/><circle cx="609.8" cy="595.7" r="3.5"/><circle cx="604.0" cy="599.7" r="3.5"/><circle cx="601.9" cy="601.8" r="3.5"/><circle cx="592.0" cy="600.9" r="3.5"/><circle cx="600.0" cy="608.8" r="3.5"/><circle cx="616.8" cy="605.8" r="3.5"/><circle cx="609.8" cy="610.7" r="3.5"/><circle cx="567.0" cy="608.8" r="3.5"/><circle cx="562.1" cy="614.7" r="3.5"/><circle cx="586.9" cy="613.7" r="3.5"/><circle cx="575.9" cy="619.6" r="3.5"/><circle cx="575.9" cy="625.7" r="3.5"/><circle cx="578.0" cy="634.8" r="3.5"/><circle cx="600.9" cy="632.9" r="3.5"/><circle cx="617.8" cy="619.6" r="3.5"/><circle cx="623.9" cy="624.7" r="3.5"/><circle cx="621.8" cy="631.8" r="3.5"/><circle cx="629.9" cy="611.7" r="3.5"/><circle cx="633.9" cy="613.7" r="3.5"/><circle cx="648.9" cy="604.8" r="3.5"/><circle cx="643.8" cy="621.7" r="3.5"/><circle cx="670.7" cy="588.7" r="3.5"/><circle cx="678.8" cy="596.9" r="3.5"/><circle cx="698.7" cy="597.8" r="3.5"/><circle cx="702.9" cy="603.7" r="3.5"/><circle cx="701.8" cy="617.7" r="3.5"/><circle cx="715.0" cy="623.7" r="3.5"/><circle cx="662.7" cy="611.7" r="3.5"/><circle cx="668.8" cy="609.8" r="3.5"/><circle cx="668.8" cy="615.8" r="3.5"/><circle cx="661.8" cy="621.7" r="3.5"/><circle cx="657.8" cy="625.7" r="3.5"/><circle cx="642.8" cy="633.8" r="3.5"/><circle cx="646.8" cy="634.8" r="3.5"/><circle cx="654.7" cy="636.7" r="3.5"/><circle cx="639.8" cy="639.7" r="3.5"/><circle cx="635.8" cy="640.5" r="3.5"/><circle cx="669.7" cy="642.9" r="3.5"/><circle cx="719.1" cy="531.7" r="3.5"/><circle cx="771.7" cy="524.8" r="3.5"/><circle cx="771.7" cy="537.7" r="3.5"/><circle cx="865.7" cy="523.1" r="3.5"/><circle cx="856.9" cy="536.4" r="3.5"/><circle cx="856.9" cy="546.7" r="3.5"/><circle cx="864.8" cy="572.6" r="3.5"/><circle cx="721.0" cy="582.9" r="3.5"/><circle cx="748.8" cy="580.7" r="3.5"/><circle cx="763.8" cy="587.8" r="3.5"/><circle cx="762.5" cy="589.3" r="3.5"/><circle cx="744.7" cy="593.8" r="3.5"/><circle cx="732.8" cy="597.6" r="3.5"/><circle cx="782.8" cy="598.7" r="3.5"/><circle cx="741.8" cy="616.7" r="3.5"/><circle cx="740.9" cy="631.7" r="3.5"/><circle cx="743.0" cy="632.7" r="3.5"/><circle cx="814.7" cy="591.6" r="3.5"/><circle cx="829.9" cy="598.7" r="3.5"/><circle cx="810.7" cy="613.7" r="3.5"/><circle cx="820.7" cy="618.0" r="3.5"/><circle cx="831.9" cy="616.7" r="3.5"/><circle cx="849.6" cy="583.7" r="3.5"/><circle cx="855.8" cy="583.7" r="3.5"/><circle cx="846.8" cy="593.8" r="3.5"/><circle cx="851.1" cy="597.6" r="3.5"/><circle cx="858.0" cy="597.6" r="3.5"/><circle cx="850.1" cy="601.7" r="3.5"/><circle cx="853.7" cy="602.8" r="3.5"/><circle cx="871.9" cy="589.7" r="3.5"/><circle cx="879.8" cy="586.7" r="3.5"/><circle cx="875.7" cy="602.8" r="3.5"/><circle cx="885.8" cy="608.5" r="3.5"/><circle cx="867.0" cy="609.6" r="3.5"/><circle cx="855.8" cy="615.6" r="3.5"/><circle cx="871.9" cy="621.6" r="3.5"/><circle cx="854.8" cy="624.8" r="3.5"/><circle cx="867.8" cy="627.4" r="3.5"/><circle cx="866.5" cy="631.7" r="3.5"/><circle cx="851.8" cy="632.5" r="3.5"/><circle cx="828.9" cy="641.7" r="3.5"/><circle cx="841.7" cy="642.8" r="3.5"/><circle cx="871.9" cy="642.8" r="3.5"/><circle cx="884.7" cy="640.6" r="3.5"/></g></svg>
<svg id="ico" style="left:0;top:0" width="925" height="686" viewBox="0 0 925 686"><g transform="translate(39,73.5)"><path d="M-7.4,-9.9 H2.5 L7.4,-5 V10.9 H-7.4 Z" fill="#fff" stroke="#6f6f67" stroke-width="1.2" stroke-linejoin="round"/><path d="M2.5,-9.9 V-5 H7.4" fill="#f4f4f4" stroke="#6f6f67" stroke-width="1.2" stroke-linejoin="round"/></g><g transform="translate(70,73.5)"><path d="M-10.5,9 V-7.5 H-4 L-3,-5 H8 V-2" fill="#f3d340" stroke="#d6ae2c" stroke-width="1"/><path d="M-10.5,9 L-8,-2.5 H11 L8.5,9 Z" fill="#f7de55" stroke="#d9b43a" stroke-width="1"/></g><g transform="translate(101,73.5)"><rect x="-9.7" y="-10.2" width="19.4" height="20.4" rx="2.2" fill="#5d86c0" stroke="#4a72ad" stroke-width="1"/><rect x="-7" y="-10" width="14" height="10" fill="#fbfbfb"/><path d="M-5.5,-7.5 H5.5 M-5.5,-5.3 H5.5 M-5.5,-3.1 H5.5" stroke="#5a5a5a" stroke-width=".9"/><rect x="-6.5" y="3" width="13" height="7.3" fill="#f6f6f6"/><rect x="-4.5" y="4.5" width="2.6" height="4.8" fill="#3e5f95"/></g><g transform="translate(132,73.5)"><rect x="-9.7" y="-10.2" width="19.4" height="20.4" rx="2.2" fill="#5d86c0" stroke="#4a72ad" stroke-width="1"/><rect x="-7" y="-10" width="14" height="10" fill="#fbfbfb"/><path d="M-5.5,-7.5 H5.5 M-5.5,-5.3 H5.5 M-5.5,-3.1 H5.5" stroke="#5a5a5a" stroke-width=".9"/><rect x="-6.5" y="3" width="13" height="7.3" fill="#f6f6f6"/><rect x="-4.5" y="4.5" width="2.6" height="4.8" fill="#3e5f95"/><rect x="2.5" y="2.5" width="9.5" height="9.5" rx="2" fill="#4e6a57" stroke="#3f5747" stroke-width=".6"/><path d="M5,9.5 L9.5,5" stroke="#fff" stroke-width="2" stroke-linecap="round"/></g><g transform="translate(163,73.5)"><path d="M-10.5,-9.5 H5.5 L10.5,-4.5 V10 H-10.5 Z" fill="#fcfcfc" stroke="#77776f" stroke-width="1"/><path d="M5.5,-9.5 V-4.5 H10.5" fill="#eee" stroke="#77776f" stroke-width="1"/><rect x="-7" y="-6.5" width="14" height="13" fill="none" stroke="#b9c6e6" stroke-width="1"/><path d="M-9.5,-9 H-1 V-5.5 H-6 V9 H-9.5 Z" fill="#f2cf3c" stroke="#d2a926" stroke-width=".8"/><path d="M-9,-3 h2 M-9,0 h2 M-9,3 h2 M-9,6 h2" stroke="#c79f1e" stroke-width=".8"/><rect x="1" y="1.5" width="10.5" height="10.5" rx="1.5" fill="#c9a417"/><g stroke="#fff" stroke-width="1.3" fill="none"><path d="M6.25,2.95 v7.6 M2.45,6.75 h7.6 M3.65,4.15 l5.2,5.2 M8.85,4.15 l-5.2,5.2"/></g><circle cx="6.25" cy="6.75" r="1.9" fill="#fff"/><circle cx="6.25" cy="6.75" r=".8" fill="#c9a417"/></g><g transform="translate(194,73.5)"><path d="M-10.5,-9.5 H5.5 L10.5,-4.5 V10 H-10.5 Z" fill="#fcfcfc" stroke="#77776f" stroke-width="1"/><path d="M5.5,-9.5 V-4.5 H10.5" fill="#eee" stroke="#77776f" stroke-width="1"/><rect x="-8.5" y="-7.2" width="17" height="15.3" fill="#fbfcff" stroke="#c3d0ec" stroke-width="1"/><path d="M2.3,1.2 L9.3,10.3" stroke="#6b5a2a" stroke-width="4.6" stroke-linecap="round"/><path d="M3.6,3 L9.1,10" stroke="#f7d264" stroke-width="3" stroke-linecap="round"/><path d="M1.3,0 L3.6,3" stroke="#3a3a3a" stroke-width="4.2"/><path d="M-1.5,-6.2 A4.2,4.2 0 1 1 -4.2,-1.6" fill="none" stroke="#9a9a9a" stroke-width="3.4" stroke-linecap="round"/><path d="M-1.5,-6.2 A4.2,4.2 0 1 1 -4.2,-1.6" fill="none" stroke="#ededed" stroke-width="2.2" stroke-linecap="round"/></g><g transform="translate(225,73.5)"><circle cx="-5.5" cy="-5.5" r="4.6" fill="#c9602a" stroke="#a94d1e" stroke-width=".6" stroke-dasharray="1.5 1"/><path d="M2,-2.5 L9,-9.5" stroke="#4f78b5" stroke-width="2.4" stroke-linecap="round"/><rect x="-9.5" y="2" width="8.5" height="8.5" fill="#7d8c80" stroke="#4e6a57" stroke-width="1"/></g><g transform="translate(269.6,74.3)"><path transform="scale(1.12,1.0)" d="M-3,11.5 C-4.5,8 -7,5.5 -8,3 C-8.8,1 -6.5,0.2 -5.2,2 L-3.5,4.2 V-7 C-3.5,-9 -1,-9 -1,-7 V-2 V-9 C-1,-11.2 1.6,-11.2 1.6,-9 V-2.4 V-8.2 C1.6,-10.2 4.2,-10.2 4.2,-8.2 V-1.6 V-5.8 C4.2,-7.6 6.6,-7.6 6.6,-5.8 V3 C6.6,7 5.5,8.5 5,11.5 Z" fill="#fff" stroke="#222" stroke-width="1.1" stroke-linejoin="round"/></g><g transform="translate(299,73.5)"><rect x="-10" y="-9.5" width="14" height="13.5" fill="#f7dc50" stroke="#d9b43a" stroke-width="1"/><path transform="translate(0,0.5) rotate(0)" d="M0,-10.5 L4.4,-5.3 H1.8 V-3.6 H-1.8 V-5.3 H-4.4 Z" fill="#5a86c4" stroke="#3f6aa8" stroke-width=".6"/><path transform="translate(0,0.5) rotate(90)" d="M0,-10.5 L4.4,-5.3 H1.8 V-3.6 H-1.8 V-5.3 H-4.4 Z" fill="#5a86c4" stroke="#3f6aa8" stroke-width=".6"/><path transform="translate(0,0.5) rotate(180)" d="M0,-10.5 L4.4,-5.3 H1.8 V-3.6 H-1.8 V-5.3 H-4.4 Z" fill="#5a86c4" stroke="#3f6aa8" stroke-width=".6"/><path transform="translate(0,0.5) rotate(270)" d="M0,-10.5 L4.4,-5.3 H1.8 V-3.6 H-1.8 V-5.3 H-4.4 Z" fill="#5a86c4" stroke="#3f6aa8" stroke-width=".6"/></g><g transform="translate(0,0)"><defs><radialGradient id="lg" cx=".4" cy=".35" r=".75"><stop offset="0" stop-color="#fff"/><stop offset=".7" stop-color="#f0f0f0"/><stop offset="1" stop-color="#d8d8d8"/></radialGradient></defs></g><g transform="translate(0,0)"><path d="M327.04,76.46 L319.54,83.96" stroke="#a88a22" stroke-width="4.2"/><path d="M325.54,77.96 L319.94,83.56" stroke="#f2c832" stroke-width="2.8"/><circle cx="326.54" cy="76.96" r="1.7" fill="#222"/><circle cx="332.3" cy="71.2" r="8" fill="url(#lg)" stroke="#8c8c8c" stroke-width="1.2"/><path d="M327.3,71.2 h10 M332.3,66.2 v10" stroke="#4c7fc0" stroke-width="2.4"/></g><g transform="translate(0,0)"><path d="M358.24,76.46 L350.74,83.96" stroke="#a88a22" stroke-width="4.2"/><path d="M356.74,77.96 L351.14,83.56" stroke="#f2c832" stroke-width="2.8"/><circle cx="357.74" cy="76.96" r="1.7" fill="#222"/><circle cx="363.5" cy="71.2" r="8" fill="url(#lg)" stroke="#8c8c8c" stroke-width="1.2"/><path d="M358.5,71.2 h10" stroke="#4c7fc0" stroke-width="2.4"/></g><g transform="translate(0,0)"><path d="M389.54,76.06 L382.04,83.56" stroke="#c2c2c2" stroke-width="4.2"/><path d="M388.04,77.56 L382.44,83.16" stroke="#d8d8d8" stroke-width="2.8"/><circle cx="394.8" cy="70.8" r="8" fill="#f4f4f4" stroke="#cfcfcf" stroke-width="1.2"/></g><g transform="translate(0,0)"><path transform="translate(425,72) rotate(0)" d="M-10,-9.5 H-2.5 L-4.8,-7.2 L-1,-3.4 L-3.4,-1 L-7.2,-4.8 L-10,-2 Z" fill="#5a86c4" stroke="#3f6aa8" stroke-width=".6"/><path transform="translate(425,72) rotate(90)" d="M-10,-9.5 H-2.5 L-4.8,-7.2 L-1,-3.4 L-3.4,-1 L-7.2,-4.8 L-10,-2 Z" fill="#5a86c4" stroke="#3f6aa8" stroke-width=".6"/><path transform="translate(425,72) rotate(180)" d="M-10,-9.5 H-2.5 L-4.8,-7.2 L-1,-3.4 L-3.4,-1 L-7.2,-4.8 L-10,-2 Z" fill="#5a86c4" stroke="#3f6aa8" stroke-width=".6"/><path transform="translate(425,72) rotate(270)" d="M-10,-9.5 H-2.5 L-4.8,-7.2 L-1,-3.4 L-3.4,-1 L-7.2,-4.8 L-10,-2 Z" fill="#5a86c4" stroke="#3f6aa8" stroke-width=".6"/><path d="M421.264,75.536 L413.764,83.036" stroke="#a88a22" stroke-width="4.2"/><path d="M419.764,77.036 L414.164,82.636" stroke="#f2c832" stroke-width="2.8"/><circle cx="420.764" cy="76.036" r="1.7" fill="#222"/><circle cx="425.3" cy="71.5" r="6.3" fill="url(#lg)" stroke="#8c8c8c" stroke-width="1.2"/></g><g transform="translate(0,0)"><rect x="444.5" y="64.5" width="10" height="13.5" fill="#f7dc50" stroke="#d9b43a" stroke-width="1"/><path d="M452.324,76.276 L444.824,83.776" stroke="#a88a22" stroke-width="4.2"/><path d="M450.824,77.776 L445.224,83.376" stroke="#f2c832" stroke-width="2.8"/><circle cx="451.824" cy="76.776" r="1.7" fill="#222"/><circle cx="457.8" cy="70.8" r="8.3" fill="url(#lg)" stroke="#8c8c8c" stroke-width="1.2"/><path d="M457.8,63 v15.6" stroke="#c9c9c9" stroke-width="1"/></g><g transform="translate(0,0)"><rect x="475.5" y="64.5" width="10" height="13.5" fill="#fdfdfd" stroke="#8a8a82" stroke-width="1"/><path d="M483.224,76.276 L475.724,83.776" stroke="#a88a22" stroke-width="4.2"/><path d="M481.724,77.776 L476.124,83.376" stroke="#f2c832" stroke-width="2.8"/><circle cx="482.724" cy="76.776" r="1.7" fill="#222"/><circle cx="488.7" cy="70.8" r="8.3" fill="url(#lg)" stroke="#8c8c8c" stroke-width="1.2"/><path d="M488.7,63 v15.6" stroke="#c9c9c9" stroke-width="1"/></g><g transform="translate(0,0)"><path d="M513.74,76.36 L506.24,83.86" stroke="#a88a22" stroke-width="4.2"/><path d="M512.24,77.86 L506.64,83.46" stroke="#f2c832" stroke-width="2.8"/><circle cx="513.24" cy="76.86" r="1.7" fill="#222"/><circle cx="519" cy="71.1" r="8" fill="url(#lg)" stroke="#8c8c8c" stroke-width="1.2"/><rect x="517.5" y="75" width="10.5" height="10.5" fill="#4c7fc0"/><path d="M525.5,77.3 L520.2,80.3 L525.5,83.3" fill="none" stroke="#fff" stroke-width="1.8"/></g><g transform="translate(0,0)"><path d="M544.74,76.36 L537.24,83.86" stroke="#c2c2c2" stroke-width="4.2"/><path d="M543.24,77.86 L537.64,83.46" stroke="#d8d8d8" stroke-width="2.8"/><circle cx="550" cy="71.1" r="8" fill="#f4f4f4" stroke="#cfcfcf" stroke-width="1.2"/><rect x="548.5" y="75" width="10.5" height="10.5" fill="#d2d2d2"/><path d="M551,77.3 L556.3,80.3 L551,83.3" fill="none" stroke="#f4f4f4" stroke-width="1.8"/></g><g transform="translate(0,0)"><defs><linearGradient id="scg" x1="0" y1="0" x2="1" y2="1"><stop offset="0" stop-color="#efefef"/><stop offset="1" stop-color="#cdcdcd"/></linearGradient></defs></g><g transform="translate(0,0)"><path d="M568.5,64 H587.5 V83 H571.5 C569.5,83 568.5,81 568.5,79 Z" fill="url(#scg)" stroke="#9b9b9b" stroke-width="1"/><path d="M572,64.5 V79 C572,81 571,82.5 570,82.5" fill="none" stroke="#aaa" stroke-width="1"/><path d="M570.3,65 V78" stroke="#fafafa" stroke-width="1.4"/><rect x="579" y="75" width="10.5" height="10.5" rx="1.5" fill="#c9a417"/><g stroke="#fff" stroke-width="1.3" fill="none"><path d="M584.25,76.45 v7.6 M580.45,80.25 h7.6 M581.65,77.65 l5.2,5.2 M586.85,77.65 l-5.2,5.2"/></g><circle cx="584.25" cy="80.25" r="1.9" fill="#fff"/><circle cx="584.25" cy="80.25" r=".8" fill="#c9a417"/></g><g transform="translate(0,0)"><path d="M599.5,64 H618.5 V83 H602.5 C600.5,83 599.5,81 599.5,79 Z" fill="url(#scg)" stroke="#9b9b9b" stroke-width="1"/><path d="M603,64.5 V79 C603,81 602,82.5 601,82.5" fill="none" stroke="#aaa" stroke-width="1"/><path d="M601.3,65 V78" stroke="#fafafa" stroke-width="1.4"/><path d="M610.5,63.5 h4 v10 l-2,-2 l-2,2 Z" fill="#4c7fc0" stroke="#365f9c" stroke-width=".8"/><rect x="610" y="75" width="10.5" height="10.5" rx="1.5" fill="#c9a417"/><g stroke="#fff" stroke-width="1.3" fill="none"><path d="M615.25,76.45 v7.6 M611.45,80.25 h7.6 M612.65,77.65 l5.2,5.2 M617.85,77.65 l-5.2,5.2"/></g><circle cx="615.25" cy="80.25" r="1.9" fill="#fff"/><circle cx="615.25" cy="80.25" r=".8" fill="#c9a417"/></g><g transform="translate(0,0)"><path d="M630,64 H649 V83 H633 C631,83 630,81 630,79 Z" fill="url(#scg)" stroke="#9b9b9b" stroke-width="1"/><path d="M633.5,64.5 V79 C633.5,81 632.5,82.5 631.5,82.5" fill="none" stroke="#aaa" stroke-width="1"/><path d="M631.8,65 V78" stroke="#fafafa" stroke-width="1.4"/><path d="M641,63.5 h4 v10 l-2,-2 l-2,2 Z" fill="#4c7fc0" stroke="#365f9c" stroke-width=".8"/></g><g transform="translate(0,0)"><g transform="translate(671,73.5) scale(1)"><path d="M-9.8,-0.6 C-9.8,-7.8 -3,-11.2 3,-8.7 L5,-11 L9.8,-2.4 L0,-2.4 L2.3,-5 C-1,-6.8 -4.6,-4.2 -4.6,-0.6 Z" fill="#4f88cf" stroke="#3a70b8" stroke-width=".7"/><path d="M9.8,1.1 C9.8,8.3 3,11.7 -3,9.2 L-5,11.5 L-9.8,2.9 L0,2.9 L-2.3,5.5 C1,7.3 4.6,4.7 4.6,1.1 Z" fill="#5f97dc" stroke="#3a70b8" stroke-width=".7"/></g></g><g transform="translate(0,0)"><path d="M27,104.4 L36,101.5 L42.1,112.8 L32.4,117.8 Z" fill="#d9702a" stroke="#b85a1c" stroke-width=".5"/><path d="M30.7,99.2 L39.4,98.7 L40.8,112.1 L32.4,113.1 Z" fill="#f4c83a" stroke="#d6a820" stroke-width=".5"/><path d="M37.7,96 L50.8,99 L47.8,111.4 L34.7,108.4 Z" fill="#6a96cd" stroke="#34568c" stroke-width=".8"/><rect x="42" y="111" width="9" height="9" rx="1.5" fill="#5b7564"/><path d="M46.5,112.5 v6 M43.5,115.5 h6" stroke="#fff" stroke-width="1.9"/></g><g transform="translate(0,0)"><g transform="translate(70.2,107.5) scale(1)"><path d="M-12,-4.4 L0,-10.5 L11.4,-4.1 L0,2.6 Z" fill="#8a7420" stroke="#333" stroke-width=".8"/><circle cx="0" cy="-4.2" r="7.3" fill="#a9c5e8" stroke="#6f93c6" stroke-width=".6"/><path transform="translate(0,.9) scale(.9)" d="M-6,-8 q2,-3 5,-2.5 q1.5,1.5 -.5,3 q1,2 -1,3.5 q-1,2.5 -2.5,1.5 q-.5,-2 -1.8,-2.6 z M1.8,-10 q3.5,.3 5,3.5 q.6,2.6 -1.2,3.6 q-.6,-2 -2.3,-2.4 q-2.2,-1.2 -1.5,-4.7 z M1,-3.5 q1.8,.2 2,2 q-.5,2 -1.8,2 q-1,-1.8 -.2,-4 z" fill="#3a659a"/><path d="M-12,-4.4 L0,2.6 V12 L-12,4.6 Z" fill="#d9a80f" stroke="#333" stroke-width=".9" stroke-linejoin="round"/><path d="M0,2.6 L11.4,-4.1 V4.6 L0,12 Z" fill="#fdf0a0" stroke="#333" stroke-width=".9" stroke-linejoin="round"/></g><rect x="73.2" y="111" width="9" height="9" rx="1.5" fill="#c9a417"/><g stroke="#fff" stroke-width="1.4" fill="none" stroke-linecap="round"><path d="M77.7,112.7 v5.6 M75.3,114.1 l4.8,2.8 M80.1,114.1 l-4.8,2.8"/></g></g><g transform="translate(101,107.5)"><path d="M-9.7,-8.8 L-3,5.7 L3.7,-8.8 L10,-8.8" fill="none" stroke="#333" stroke-width="1.1"/><rect x="-11.2" y="-10.3" width="3" height="3" fill="#fff" stroke="#333" stroke-width=".8" transform="rotate(45 -9.7 -8.8)"/><rect x="2.2" y="-10.3" width="3" height="3" fill="#fff" stroke="#333" stroke-width=".8" transform="rotate(45 3.7 -8.8)"/><rect x="8.5" y="-10.3" width="3" height="3" fill="#fff" stroke="#333" stroke-width=".8" transform="rotate(45 10 -8.8)"/><circle cx="-3" cy="5.7" r="1.6" fill="#fff" stroke="#333" stroke-width=".8"/><rect x="3.2" y="3.5" width="9.2" height="9.2" rx="1.5" fill="#c9a417"/><g stroke="#fff" stroke-width="1.4" fill="none" stroke-linecap="round"><path d="M7.8,5.3 v5.6 M5.4,6.7 l4.8,2.8 M10.2,6.7 l-4.8,2.8"/></g></g><g transform="translate(0,0)"><g transform="translate(132,107.5) scale(1)"><path d="M-11.3,12 C-10,2 -3,-7.5 11,-11.5 C10,-4.5 3,1.5 -6.5,4 C-8.5,6 -10.3,9.5 -11.3,12 Z" fill="#86a6d0" stroke="#4a6d9c" stroke-width=".8"/><path d="M-4,-3 L-1,1.8 M0,-6 L3.5,-0.8 M4.5,-8.7 L7.3,-4.2" stroke="#5578a8" stroke-width=".7"/><path d="M-11.5,12 C-7,2 1,-6 11,-11.5" fill="none" stroke="#3f6090" stroke-width="1"/></g></g><g transform="translate(132,107.5)"><rect x="3" y="3.5" width="9.4" height="9.4" rx="1.5" fill="#c9a417"/><g stroke="#fff" stroke-width="1.4" fill="none" stroke-linecap="round"><path d="M7.7,5.4 v5.6 M5.3,6.8 l4.8,2.8 M10.1,6.8 l-4.8,2.8"/></g></g><g transform="translate(163.5,107.5)"><path d="M-6.5,-9.5 v4 M-3.2,-9.5 v4 M0,-9.5 v4 M3.2,-9.5 v4 M6.5,-9.5 v4 M-6.5,5 v4 M-3.2,5 v4 M0,5 v4" stroke="#3c5f96" stroke-width="1.3"/><rect x="-9.5" y="-5.5" width="19" height="11" rx="1.5" fill="#6a97d6" stroke="#3f6aa8" stroke-width="1"/><rect x="2.8" y="3.5" width="9.3" height="9.3" rx="1.5" fill="#c9a417"/><g stroke="#fff" stroke-width="1.4" fill="none" stroke-linecap="round"><path d="M7.45,5.35 v5.6 M5.05,6.75 l4.8,2.8 M9.85,6.75 l-4.8,2.8"/></g></g><g transform="translate(0,0)"><circle cx="202.4" cy="105" r="8.3" fill="#5b86c5" stroke="#4a72ad" stroke-width=".8"/><path transform="translate(206,106) rotate(-18)" d="M0,0 L0,13 L3,10.2 L5.3,15.2 L7.5,14.2 L5.2,9.3 L9.3,9.3 Z" fill="#fff" stroke="#333" stroke-width="1"/></g><g transform="translate(0,0)"><polygon points="233.67,96.04 236.93,96.04 237.07,98.01 239.27,98.92 240.76,97.63 243.07,99.94 241.78,101.43 242.69,103.63 244.66,103.77 244.66,107.03 242.69,107.17 241.78,109.37 243.07,110.86 240.76,113.17 239.27,111.88 237.07,112.79 236.93,114.76 233.67,114.76 233.53,112.79 231.33,111.88 229.84,113.17 227.53,110.86 228.82,109.37 227.91,107.17 225.94,107.03 225.94,103.77 227.91,103.63 228.82,101.43 227.53,99.94 229.84,97.63 231.33,98.92 233.53,98.01" fill="#e9e9e9" stroke="#d6d6d6" stroke-width="1" stroke-linejoin="round"/><circle cx="235.3" cy="105.4" r="4.5" fill="#f0f0f0" stroke="#d6d6d6" stroke-width="1"/><path d="M233.5,102.5 L238.8,105.4 L233.5,108.3 Z" fill="#d4d4d4"/><path transform="translate(238.5,106.5) rotate(-18)" d="M0,0 L0,13 L3,10.2 L5.3,15.2 L7.5,14.2 L5.2,9.3 L9.3,9.3 Z" fill="#f2f2f2" stroke="#cfcfcf" stroke-width="1"/></g><g transform="translate(0,0)"><path d="M254.6,105.7 h7.4 l-3.7,4.2 Z" fill="#6a6a6a"/></g><g transform="translate(0,0)"><path d="M297.9,105.7 h7.4 l-3.7,4.2 Z" fill="#222"/></g><g transform="translate(0,0)"><path d="M340.6,105.7 h7.4 l-3.7,4.2 Z" fill="#222"/></g><g transform="translate(0,0)"><path d="M538.7,105.7 h7.4 l-3.7,4.2 Z" fill="#222"/></g><g transform="translate(0,0)"><path d="M613,105.7 h7.4 l-3.7,4.2 Z" fill="#222"/></g><g transform="translate(0,0)"><rect x="269" y="97.5" width="21.5" height="19" fill="#e2e2e2" stroke="#333" stroke-width="1" stroke-dasharray="2 1.4"/><rect x="270.7" y="98.7" width="13" height="12.5" fill="#f7dc50" stroke="#d9b43a" stroke-width="1"/><path transform="translate(279.5,103.5) rotate(-18)" d="M0,0 L0,13 L3,10.2 L5.3,15.2 L7.5,14.2 L5.2,9.3 L9.3,9.3 Z" fill="#fff" stroke="#333" stroke-width="1"/></g><g transform="translate(0,0)"><rect x="319.5" y="104.5" width="13.5" height="13" fill="#f7dc50" stroke="#d9b43a" stroke-width="1"/></g><g transform="translate(0,0)"><rect x="356.5" y="98.3" width="13.5" height="13" fill="#f7dc50" stroke="#d9b43a" stroke-width="1"/><rect x="367.3" y="109.3" width="10.4" height="10.4" rx="2" fill="#f3e6de" stroke="#c9602a" stroke-width="1.3"/><circle cx="372.5" cy="114.5" r="3.4" fill="#a9a9a9"/><path d="M370.3,116.7 L374.7,112.3" stroke="#f3e6de" stroke-width="1.2"/></g><g transform="translate(0,0)"><rect x="387.7" y="98.5" width="19" height="19" rx="1" fill="#f7f9fd" stroke="#6f9bd6" stroke-width="1.2"/><path d="M389.5,101 h4 M395.5,101 h9.5" stroke="#5f8fd0" stroke-width="1.6"/><path d="M389.5,105 h4 M395.5,105 h9.5 M389.5,108.5 h4 M395.5,108.5 h9.5 M389.5,112 h4 M395.5,112 h9.5 M389.5,115 h4 M395.5,115 h9.5" stroke="#8fb2e0" stroke-width="1"/></g><g transform="translate(0,0)"><path d="M419.5,98 V117 M437.5,98 V117" stroke="#444" stroke-width="1.2"/><path d="M419.5,100.5 H437.5 M419.5,106.3 H437.5 M419.5,112 H437.5" stroke="#555" stroke-width=".9"/><rect x="417.8" y="116.6" width="21.2" height="2" fill="#cfcfcf" stroke="#777" stroke-width=".7"/><circle cx="424.5" cy="100.5" r="2.1" fill="#f3e1d6" stroke="#c9602a" stroke-width="1.1"/><circle cx="433" cy="100.5" r="2.1" fill="#f3e1d6" stroke="#c9602a" stroke-width="1.1"/><circle cx="423.5" cy="106.3" r="2.1" fill="#dfe3df" stroke="#8a9a8e" stroke-width="1.1"/><circle cx="428.3" cy="106.3" r="2.1" fill="#dfe3df" stroke="#8a9a8e" stroke-width="1.1"/><circle cx="423.5" cy="112" r="2.1" fill="#dbe9fa" stroke="#4c7fc0" stroke-width="1.1"/><circle cx="428.3" cy="112" r="2.1" fill="#dbe9fa" stroke="#4c7fc0" stroke-width="1.1"/><circle cx="433.1" cy="112" r="2.1" fill="#dbe9fa" stroke="#4c7fc0" stroke-width="1.1"/></g><g transform="translate(0,0)"><path transform="translate(459.2,107.8) rotate(0)" d="M-1.3,-4 L-1.9,-9.4 Q0,-11.6 1.9,-9.4 L1.3,-4 Z" fill="#9cc1ec" stroke="#4a86d0" stroke-width="1"/><path transform="translate(459.2,107.8) rotate(45)" d="M-1.3,-4 L-1.9,-9.4 Q0,-11.6 1.9,-9.4 L1.3,-4 Z" fill="#9cc1ec" stroke="#4a86d0" stroke-width="1"/><path transform="translate(459.2,107.8) rotate(90)" d="M-1.3,-4 L-1.9,-9.4 Q0,-11.6 1.9,-9.4 L1.3,-4 Z" fill="#9cc1ec" stroke="#4a86d0" stroke-width="1"/><path transform="translate(459.2,107.8) rotate(135)" d="M-1.3,-4 L-1.9,-9.4 Q0,-11.6 1.9,-9.4 L1.3,-4 Z" fill="#9cc1ec" stroke="#4a86d0" stroke-width="1"/><path transform="translate(459.2,107.8) rotate(180)" d="M-1.3,-4 L-1.9,-9.4 Q0,-11.6 1.9,-9.4 L1.3,-4 Z" fill="#9cc1ec" stroke="#4a86d0" stroke-width="1"/><path transform="translate(459.2,107.8) rotate(225)" d="M-1.3,-4 L-1.9,-9.4 Q0,-11.6 1.9,-9.4 L1.3,-4 Z" fill="#9cc1ec" stroke="#4a86d0" stroke-width="1"/><path transform="translate(459.2,107.8) rotate(270)" d="M-1.3,-4 L-1.9,-9.4 Q0,-11.6 1.9,-9.4 L1.3,-4 Z" fill="#9cc1ec" stroke="#4a86d0" stroke-width="1"/><path transform="translate(459.2,107.8) rotate(315)" d="M-1.3,-4 L-1.9,-9.4 Q0,-11.6 1.9,-9.4 L1.3,-4 Z" fill="#9cc1ec" stroke="#4a86d0" stroke-width="1"/><circle cx="459.2" cy="107.8" r="5.2" fill="#9cc1ec" stroke="#4a86d0" stroke-width="1"/><circle cx="459.2" cy="107.8" r="4.5" fill="#9cc1ec"/><circle cx="459.2" cy="107.8" r="2" fill="#fff" stroke="#4a86d0" stroke-width=".8"/></g><g transform="translate(0,0)"><path d="M483,98.3 H497 V101.5 L495.5,100.3 H487.5 L492.5,107.5 L486.5,115.5 H496 L498,113.5 V117.5 H482.8 L489.5,108 Z" fill="#b58fb8" stroke="#8f6592" stroke-width=".8" stroke-linejoin="round"/></g><g transform="translate(0,0)"><path d="M511.5,102.6 H531.5 M511.5,100.5 v4.2 M531.5,100.5 v4.2" stroke="#2f5a8c" stroke-width="1.3"/><rect x="510.5" y="108.5" width="21.5" height="7.5" rx="1" fill="#cdcdcd" stroke="#8a8a8a" stroke-width="1"/><path d="M513,109 v3 M515.7,109 v4.5 M518.4,109 v3 M521.1,109 v4.5 M523.8,109 v3 M526.5,109 v4.5 M529.2,109 v3" stroke="#666" stroke-width=".9"/></g><g transform="translate(0,0)"><path d="M557.5,98.3 H573 Q576.3,98.3 576.3,101.6 V107.8 Q576.3,111.1 573,111.1 H566 L560.5,116 L562.5,111.1 H557.5 Q554.2,111.1 554.2,107.8 V101.6 Q554.2,98.3 557.5,98.3 Z" fill="#fdf190" stroke="#dfc23a" stroke-width="1.2"/><circle cx="559" cy="116" r="3.9" fill="#76827b" stroke="#5e6a63" stroke-width=".6"/><path d="M559,116.5 L563,111.5 L565.5,111.5 Z" fill="#e9cf4e"/></g><g transform="translate(0,0)"><path d="M584.5,97.5 H605.8 V112.4 H593 L584.6,118.6 L588.5,112.4 H584.5 Z" fill="#e9edf7" stroke="#b9b9b9" stroke-width="1"/></g><g transform="translate(0,0)"><circle cx="21.9" cy="20.6" r="6.3" fill="none" stroke="#d3b522" stroke-width="3.3"/><path d="M16.4,24.9 A7,7 0 0 0 24.2,27.2" fill="none" stroke="#5f7a4c" stroke-width="1.9"/><path d="M24.5,22.5 L29,27.3" stroke="#6e7d62" stroke-width="3.4"/><path d="M21.3,20 L24.8,23.2" stroke="#ecd04a" stroke-width="2.3" stroke-linecap="round"/><path d="M20.3,19 l3,.6 l-2.2,2.2 z" fill="#d8902a"/></g><g transform="translate(0,0)"><path d="M808.5,6.5 V21 Q808.5,25.5 813,25.5 H906 Q910.5,25.5 910.5,21 V6.5" fill="#fbfbfb" stroke="#9c9c9c" stroke-width="1"/><path d="M836.5,7 V25 M863.5,7 V25" stroke="#b4b4b4" stroke-width="1"/><rect x="817.5" y="16.5" width="11" height="4" rx="1" fill="#fdfdfd" stroke="#555" stroke-width="1"/><rect x="844.5" y="11.5" width="11" height="9" rx="1" fill="#f4f4f4" stroke="#555" stroke-width="1"/><rect x="847.5" y="14.5" width="5" height="3" fill="#fff" stroke="#555" stroke-width="1"/><path d="M883,11.5 H886.3 L887.9,14 L889.5,11.5 H892.8 L889.8,16 L892.8,20.5 H889.5 L887.9,18 L886.3,20.5 H883 L886,16 Z" fill="#fdfdfd" stroke="#555" stroke-width="1" stroke-linejoin="round"/></g><g transform="translate(0,0)"><rect x="245" y="132" width="8.5" height="7" fill="#d9d9d9" stroke="#333" stroke-width="1.6"/><path d="M245,132.4 h8.5" stroke="#333" stroke-width="2.4"/><rect x="241.8" y="137" width="8.5" height="7" fill="#d9d9d9" stroke="#333" stroke-width="1.6"/><path d="M241.8,137.4 h8.5" stroke="#333" stroke-width="2.4"/><path d="M262.6,133.5 l10.8,10.8 M273.4,133.5 l-10.8,10.8" stroke="#333" stroke-width="2.6"/></g><g transform="translate(0,0)"><rect x="245" y="467" width="8.5" height="7" fill="#d9d9d9" stroke="#333" stroke-width="1.6"/><path d="M245,467.4 h8.5" stroke="#333" stroke-width="2.4"/><rect x="241.8" y="472" width="8.5" height="7" fill="#d9d9d9" stroke="#333" stroke-width="1.6"/><path d="M241.8,472.4 h8.5" stroke="#333" stroke-width="2.4"/><path d="M262.6,468.5 l10.8,10.8 M273.4,468.5 l-10.8,10.8" stroke="#333" stroke-width="2.6"/></g><g transform="translate(0,0)"><rect x="20.5" y="159.5" width="11.5" height="11.5" fill="none" stroke="#70806f" stroke-width="1.1"/><rect x="28.3" y="167.3" width="6" height="6" rx="1" fill="#5b7564"/><circle cx="31.3" cy="170.3" r="1.9" fill="#cfd6d1"/></g><g transform="translate(0,0)"><g transform="translate(49.8,166.2) scale(0.74)"><path d="M-9.8,-0.6 C-9.8,-7.8 -3,-11.2 3,-8.7 L5,-11 L9.8,-2.4 L0,-2.4 L2.3,-5 C-1,-6.8 -4.6,-4.2 -4.6,-0.6 Z" fill="#4f88cf" stroke="#3a70b8" stroke-width=".7"/><path d="M9.8,1.1 C9.8,8.3 3,11.7 -3,9.2 L-5,11.5 L-9.8,2.9 L0,2.9 L-2.3,5.5 C1,7.3 4.6,4.7 4.6,1.1 Z" fill="#5f97dc" stroke="#3a70b8" stroke-width=".7"/></g></g><g transform="translate(0,0)"><path d="M66.2,161.6 H79.8 L74.6,167.3 V173.3 L71.4,171.8 V167.3 Z" fill="#5b8fd1" stroke="#3f73b8" stroke-width=".8"/><rect x="66" y="158.8" width="14" height="2.6" fill="#f2cf3c" stroke="#d6ae2c" stroke-width=".5"/></g><g transform="translate(0,0)"><path d="M90,159 V172 M90,163.5 h3 M90,169.5 h3" stroke="#999" stroke-width="1" fill="none"/><rect x="92.5" y="162" width="3.2" height="3.2" fill="#f2cf3c" stroke="#c79f1e" stroke-width=".7"/><rect x="92.5" y="168" width="3.2" height="3.2" fill="#f2cf3c" stroke="#c79f1e" stroke-width=".7"/><path d="M99.5,158.2 l4.6,5.6 h-2.6 v8 h-4 v-8 h-2.6 Z" fill="#4c7fc0" stroke="#365f9c" stroke-width=".7"/></g><g transform="translate(0,0)"><circle cx="118.7" cy="165.7" r="7" fill="#5b86c5" stroke="#4a72ad" stroke-width=".7"/></g><g transform="translate(0,0)"><path d="M28.8,187.7 L28.8,193.5 H23 Z" fill="#3c3c3c"/><path d="M49.1,207.7 L49.1,213.5 H43.3 Z" fill="#3c3c3c"/><path d="M69.1,227.7 L69.1,233.5 H63.3 Z" fill="#3c3c3c"/></g><g transform="translate(0,0)"><path d="M44.3,305.8 L48.8,310.3 L44.3,314.8 Z" fill="#fff" stroke="#9a9a9a" stroke-width="1"/><path d="M24.3,325.8 L28.8,330.3 L24.3,334.8 Z" fill="#fff" stroke="#9a9a9a" stroke-width="1"/><path d="M24.3,345.8 L28.8,350.3 L24.3,354.8 Z" fill="#fff" stroke="#9a9a9a" stroke-width="1"/><path d="M24.3,365.8 L28.8,370.3 L24.3,374.8 Z" fill="#fff" stroke="#9a9a9a" stroke-width="1"/><path d="M24.3,425.8 L28.8,430.3 L24.3,434.8 Z" fill="#fff" stroke="#9a9a9a" stroke-width="1"/></g><g transform="translate(0,0)"><polygon points="46.00,182.40 48.17,187.71 53.89,188.14 49.52,191.84 50.88,197.41 46.00,194.40 41.12,197.41 42.48,191.84 38.11,188.14 43.83,187.71" fill="#fbe86a" stroke="#d9ae1f" stroke-width="1.1" stroke-linejoin="round"/></g><g transform="translate(0,0)"><path d="M59.5,216.5 V207.5 H72.5 V216.5 H59.5 Z" fill="#f6f6f6" stroke="#8a8a84" stroke-width="1"/><path d="M59.5,204 h5 l1.5,2 h6.5" fill="none" stroke="#8f9a90" stroke-width="2"/></g><g transform="translate(0,0)"><rect x="79.5" y="224" width="13" height="12.5" fill="#f4f4f4" stroke="#8a8a84" stroke-width="1"/><path d="M86,224.5 V231" stroke="#555" stroke-width="2.2" stroke-dasharray="1 1"/><rect x="85" y="231" width="2" height="4.5" fill="#ddd" stroke="#444" stroke-width=".9"/></g><g transform="translate(0,0)"><defs><linearGradient id="pg" x1="0" y1="0" x2="1" y2="1"><stop offset="0" stop-color="#fff"/><stop offset="1" stop-color="#bcd3ee"/></linearGradient></defs><path transform="translate(106.2,249.7)" d="M-7.3,-2 C-7,-5.5 -3,-6 0,-4.2 C3,-2.8 5.5,-6.5 7.3,-3.5 C8.3,-1 6.8,2.5 7,4 C4.5,1.5 1,2.2 -1.5,3.5 C-4,5 -7,5.8 -7.3,2.5 Z" fill="url(#pg)" stroke="#3f5a86" stroke-width="1"/><path transform="translate(106.2,289.7)" d="M-7.3,-2 C-7,-5.5 -3,-6 0,-4.2 C3,-2.8 5.5,-6.5 7.3,-3.5 C8.3,-1 6.8,2.5 7,4 C4.5,1.5 1,2.2 -1.5,3.5 C-4,5 -7,5.8 -7.3,2.5 Z" fill="#8db5e3" stroke="#3f5a86" stroke-width="1"/></g><g transform="translate(0,0)"><rect x="100" y="264" width="3.3" height="3.3" fill="#2b2b33"/><rect x="103.3" y="264" width="3.3" height="3.3" fill="#9fb6d8"/><rect x="106.6" y="264" width="3.3" height="3.3" fill="#2b2b33"/><rect x="109.9" y="264" width="3.3" height="3.3" fill="#d6e2f2"/><rect x="100" y="267.3" width="3.3" height="3.3" fill="#b4c7e3"/><rect x="103.3" y="267.3" width="3.3" height="3.3" fill="#2b2b33"/><rect x="106.6" y="267.3" width="3.3" height="3.3" fill="#6f8fc0"/><rect x="109.9" y="267.3" width="3.3" height="3.3" fill="#e3ebf6"/><rect x="100" y="270.6" width="3.3" height="3.3" fill="#2b2b33"/><rect x="103.3" y="270.6" width="3.3" height="3.3" fill="#c5d5ea"/><rect x="106.6" y="270.6" width="3.3" height="3.3" fill="#2b2b33"/><rect x="109.9" y="270.6" width="3.3" height="3.3" fill="#8aa5cf"/><rect x="100" y="273.9" width="3.3" height="3.3" fill="#d6e2f2"/><rect x="103.3" y="273.9" width="3.3" height="3.3" fill="#5a7fb5"/><rect x="106.6" y="273.9" width="3.3" height="3.3" fill="#eef3fa"/><rect x="109.9" y="273.9" width="3.3" height="3.3" fill="#2b2b33"/></g><g transform="translate(0,0)"><path d="M59.5,317 V305 H64.5 l1.5,2 H72.5 V317 Z" fill="#f4f4f4" stroke="#8a8a84" stroke-width="1"/></g><g transform="translate(0,0)"><path d="M39.5,337 V325 H44.5 l1.5,2 H52.5 V337 Z" fill="#f4f4f4" stroke="#8a8a84" stroke-width="1"/><path d="M42.3,331 L46,327.5 L49.7,331 M43.3,331 V334.5 H48.7 V331" fill="none" stroke="#333" stroke-width="1"/></g><g transform="translate(0,0)"><path d="M39.5,357 V345 H44.5 l1.5,2 H52.5 V357 Z" fill="#f4f4f4" stroke="#8a8a84" stroke-width="1"/></g><g transform="translate(0,0)"><g transform="translate(46,370.2) scale(0.64)"><path d="M-12,-4.4 L0,-10.5 L11.4,-4.1 L0,2.6 Z" fill="#8a7420" stroke="#333" stroke-width=".8"/><circle cx="0" cy="-4.2" r="7.3" fill="#a9c5e8" stroke="#6f93c6" stroke-width=".6"/><path transform="translate(0,.9) scale(.9)" d="M-6,-8 q2,-3 5,-2.5 q1.5,1.5 -.5,3 q1,2 -1,3.5 q-1,2.5 -2.5,1.5 q-.5,-2 -1.8,-2.6 z M1.8,-10 q3.5,.3 5,3.5 q.6,2.6 -1.2,3.6 q-.6,-2 -2.3,-2.4 q-2.2,-1.2 -1.5,-4.7 z M1,-3.5 q1.8,.2 2,2 q-.5,2 -1.8,2 q-1,-1.8 -.2,-4 z" fill="#3a659a"/><path d="M-12,-4.4 L0,2.6 V12 L-12,4.6 Z" fill="#d9a80f" stroke="#333" stroke-width=".9" stroke-linejoin="round"/><path d="M0,2.6 L11.4,-4.1 V4.6 L0,12 Z" fill="#fdf0a0" stroke="#333" stroke-width=".9" stroke-linejoin="round"/></g></g><g transform="translate(0,0)"><g transform="translate(46,390) scale(0.62)"><path d="M-11.3,12 C-10,2 -3,-7.5 11,-11.5 C10,-4.5 3,1.5 -6.5,4 C-8.5,6 -10.3,9.5 -11.3,12 Z" fill="#86a6d0" stroke="#4a6d9c" stroke-width=".8"/><path d="M-4,-3 L-1,1.8 M0,-6 L3.5,-0.8 M4.5,-8.7 L7.3,-4.2" stroke="#5578a8" stroke-width=".7"/><path d="M-11.5,12 C-7,2 1,-6 11,-11.5" fill="none" stroke="#3f6090" stroke-width="1"/></g></g><g transform="translate(46,410)"><path d="M-7.5,-5 C-8,-8 -4,-8.3 -2,-7.5 C0,-8.3 3,-8.3 5,-7.5 C8,-8 8.3,-4 7.5,-1 C7,1 6,1.5 5.5,1.5 L7.6,1.8 L7.4,2.9 L5,2.6 C4.8,5 4.5,7.7 2.5,7.7 C0.5,7.7 0.5,5.5 0.8,3 C-1,3.5 -3.5,3 -5,1.5 C-7,0 -7.5,-3 -7.5,-5 Z" fill="#5d8ac4" stroke="#34568c" stroke-width=".9" stroke-linejoin="round"/><path d="M-2.8,-5.5 C-4,-2 -3,1 -0.8,2.2 M1.2,-5.8 C0.2,-2.5 0.6,0.5 1.3,3" fill="none" stroke="#2f4f82" stroke-width=".9"/><circle cx="3.4" cy="-3" r=".8" fill="#2a4676"/></g><g transform="translate(46,429.3)"><path d="M-7.5,-7 C-1,-7.5 4.5,-4 7.5,0.2 C3,0.8 -2.5,3 -7.5,7 C-4.8,2.5 -4.5,-2.5 -7.5,-7 Z" fill="#5d8ac4" stroke="#34568c" stroke-width=".8" stroke-linejoin="round"/><path d="M-3.5,-6.2 C-1.2,-2.5 -1.5,1.2 -3.8,4.2 M-0.2,-5 C1.6,-2 1.4,0.6 -0.2,2.4 M3,-3.3 C4,-1.6 3.9,-0.3 3.2,0.9" fill="none" stroke="#34568c" stroke-width=".9"/></g><g transform="translate(27.3,500.8)"><path d="M-1.5,0.5 L6.5,-6" stroke="#e5b93a" stroke-width="2.6" stroke-linecap="round"/><path d="M-7,-1.5 L-1,-5 L3.5,1.5 L-3,5.5 Z" fill="#e08a2e" stroke="#b56a1c" stroke-width=".6"/><path d="M-7.5,-1 L-3.5,-3.3 L-1.5,-0.3 L-5.5,2 Z" fill="#5f8ac7"/><path d="M-5,2.5 L-1,0.2 L1,3 L-3,5.5 Z" fill="#f2cf3c"/></g><g transform="translate(50,500.8)"><rect x="-6.5" y="-3" width="9" height="9.5" fill="#f0f0f0" stroke="#7a7a74" stroke-width="1"/><rect x="-3.5" y="-5.5" width="9" height="9.5" fill="#f6f6f6" stroke="#7a7a74" stroke-width="1"/><path d="M-0.5,-7 v8 M2,-7 v8 M-0.5,-7 h2.5" stroke="#3f6aa8" stroke-width="1.2" fill="none"/><rect x="2.3" y="2.5" width="5.5" height="5.5" rx="1" fill="#5b7564"/><circle cx="5" cy="5.2" r="1.6" fill="#e0e6e1"/></g><g transform="translate(73,500.8)"><path d="M-7.5,0 C-4,-5.5 4,-5.5 7.5,0 C4,5 -4,5 -7.5,0 Z" fill="#f4f4f4" stroke="#9a9a9a" stroke-width="1"/><circle cx="0" cy="-.3" r="3.3" fill="#5b86c5" stroke="#3f5f95" stroke-width=".6"/><circle cx="0" cy="-.3" r="1.3" fill="#1f2f4f"/><path d="M-7.5,-3 C-3,-7.5 4,-7 8,-2.5" fill="none" stroke="#b5b5b5" stroke-width=".8"/><path d="M3.5,5 h5 l-2.5,3 z" fill="#111"/></g><g transform="translate(0,0)"><path d="M89.2,496.3 H102.8 L97.6,502 V508 L94.4,506.5 V502 Z" fill="#5b8fd1" stroke="#3f73b8" stroke-width=".8"/><rect x="89" y="493.5" width="14" height="2.6" fill="#f2cf3c" stroke="#d6ae2c" stroke-width=".5"/></g><g transform="translate(0,0)"><path d="M119,500 h8.4 l-2.4,3 v4.5 h-3.6 v-4.5 Z" fill="#9a9a9a" stroke="#7a7a7a" stroke-width=".6"/><rect x="121.6" y="502.5" width="3.2" height="4.5" fill="#ececec"/></g><g transform="translate(0,0)"><path d="M132.5,499 h7.4 l-3.7,4.2 Z" fill="#222"/></g><g transform="translate(0,0)"><path d="M148,494 V507 M148,498.5 h3 M148,504.5 h3" stroke="#999" stroke-width="1" fill="none"/><rect x="150.5" y="497" width="3.2" height="3.2" fill="#f2cf3c" stroke="#c79f1e" stroke-width=".7"/><rect x="150.5" y="503" width="3.2" height="3.2" fill="#f2cf3c" stroke="#c79f1e" stroke-width=".7"/><path d="M157.5,507.8 l4.6,-5.6 h-2.6 v-8 h-4 v8 h-2.6 Z" fill="#4c7fc0" stroke="#365f9c" stroke-width=".7"/><path d="M170.5,494 V507 M170.5,498.5 h3 M170.5,504.5 h3" stroke="#999" stroke-width="1" fill="none"/><rect x="173" y="497" width="3.2" height="3.2" fill="#f2cf3c" stroke="#c79f1e" stroke-width=".7"/><rect x="173" y="503" width="3.2" height="3.2" fill="#f2cf3c" stroke="#c79f1e" stroke-width=".7"/><path d="M180,493.2 l4.6,5.6 h-2.6 v8 h-4 v-8 h-2.6 Z" fill="#4c7fc0" stroke="#365f9c" stroke-width=".7"/></g><g transform="translate(0,0)"><rect x="193.5" y="494.8" width="11" height="11" fill="#f4f4f4" stroke="#7a7a74" stroke-width="1.1"/><rect x="201.2" y="503.1" width="5.8" height="4.3" rx="1.6" fill="#fff" stroke="#d9772a" stroke-width="1.2"/><path d="M202.8,505.25 h2.6" stroke="#d9772a" stroke-width="1"/></g><g transform="translate(0,0)"><rect x="38.5" y="519.5" width="12" height="12" fill="#f8f8f8" stroke="#8e8f8f" stroke-width="1"/><rect x="40.5" y="521.5" width="8" height="8" fill="#f4f4f4" stroke="#c8cbd0" stroke-width="1"/><path d="M41.3,525.2 l2.2,3 l3.8,-7" fill="none" stroke="#3b5ba5" stroke-width="1.7"/><circle cx="64.5" cy="525.3" r="2.8" fill="#8d9bbb" stroke="#7f8799" stroke-width=".9"/></g><g transform="translate(0,0)"><rect x="709.5" y="652.5" width="12" height="12" fill="#f8f8f8" stroke="#8e8f8f" stroke-width="1"/><rect x="711.5" y="654.5" width="8" height="8" fill="#f4f4f4" stroke="#c8cbd0" stroke-width="1"/><path d="M712.3,658.2 l2.2,3 l3.8,-7" fill="none" stroke="#3b5ba5" stroke-width="1.7"/></g><g transform="translate(0,0)"><defs><linearGradient id="sv" x1="0" y1="0" x2="1" y2="0"><stop offset="0" stop-color="#f3f3f3"/><stop offset=".45" stop-color="#e6e6e6"/><stop offset=".5" stop-color="#d6d6d6"/><stop offset="1" stop-color="#d0d0d0"/></linearGradient><linearGradient id="sh" x1="0" y1="0" x2="0" y2="1"><stop offset="0" stop-color="#f3f3f3"/><stop offset=".45" stop-color="#e6e6e6"/><stop offset=".5" stop-color="#d6d6d6"/><stop offset="1" stop-color="#d0d0d0"/></linearGradient></defs><rect x="263" y="180" width="16" height="258" fill="#f0f0f0"/><rect x="15" y="438" width="264" height="17" fill="#f0f0f0"/><rect x="264.5" y="198.5" width="13" height="119" rx="2" fill="url(#sv)" stroke="#979797" stroke-width="1"/><path d="M267.5,255 h7 M267.5,257.5 h7 M267.5,260 h7" stroke="#5f5f5f" stroke-width="1"/><path d="M267.5,256 h7 M267.5,258.5 h7 M267.5,261 h7" stroke="#fff" stroke-width="1"/><path d="M267.5,191 l3.7,-4 l3.7,4 Z M267.5,427.5 l3.7,4 l3.7,-4 Z M22.5,442.5 l-4,3.7 l4,3.7 Z M251.5,442.5 l4,3.7 l-4,3.7 Z" fill="#444"/><rect x="33.5" y="439.5" width="146" height="14" rx="2" fill="url(#sh)" stroke="#979797" stroke-width="1"/><path d="M104,443 v7 M106.5,443 v7 M109,443 v7" stroke="#5f5f5f" stroke-width="1"/><path d="M105,443 v7 M107.5,443 v7 M110,443 v7" stroke="#fff" stroke-width="1"/></g><g transform="translate(0,0)"><circle cx="31.3" cy="657.5" r="4.2" fill="none" stroke="#8e8e8e" stroke-width="1.4"/><path d="M34.3,660.8 L38,664.8" stroke="#8e8e8e" stroke-width="1.7" stroke-linecap="round"/></g><g transform="translate(365.5,659)"><g transform="rotate(-30)"><rect x="-5" y="-7" width="10" height="14.5" rx="4.8" fill="#cfcfcf" stroke="#333" stroke-width="1.2"/><path d="M-5,-1.5 h10 M0,-7 v5.5" stroke="#333" stroke-width="1.1"/><path d="M-4,-5.5 L-1.2,-2 M-2.3,-6.5 L0.2,-3 M1,-6.5 L3.8,-2.5 M2.8,-6 L4.5,-3.5" stroke="#222" stroke-width="1.1"/><circle cx="0.3" cy="3.2" r="2" fill="#f0f0f0" stroke="#333" stroke-width="1"/></g><path d="M4,-7.5 l2.5,-2 M6.5,-5.5 l2,-1" stroke="#555" stroke-width=".9"/></g><g transform="translate(0,0)"><path d="M459.6,657.6 h8 l-4,4.4 Z" fill="#111"/></g><g transform="translate(0,0)"><path d="M485.5,658 V655.5 A3.8,3.8 0 0 1 493.1,655.5 V658" fill="none" stroke="#8a8a8a" stroke-width="1.8"/><rect x="483" y="657.7" width="12.6" height="8.6" rx="1.3" fill="#757575"/></g><g transform="translate(0,0)"><rect x="583.5" y="650.5" width="13" height="8" fill="#f2f2f2" stroke="#c4c4c4" stroke-width="1"/><rect x="583.5" y="659" width="13" height="8" fill="#f2f2f2" stroke="#c4c4c4" stroke-width="1"/><path d="M587.3,656 l2.7,-3 l2.7,3 Z M587.3,661.8 l2.7,3 l2.7,-3 Z" fill="#3f6aa8"/><rect x="687.5" y="650.5" width="13" height="8" fill="#f2f2f2" stroke="#c4c4c4" stroke-width="1"/><rect x="687.5" y="659" width="13" height="8" fill="#f2f2f2" stroke="#c4c4c4" stroke-width="1"/><path d="M691.3,656 l2.7,-3 l2.7,3 Z M691.3,661.8 l2.7,3 l2.7,-3 Z" fill="#3f6aa8"/></g><g transform="translate(786.8,658.7)"><g fill="none" stroke="#6f6f6f" stroke-width=".9"><circle r="7.2"/><ellipse rx="3.4" ry="7.2"/><path d="M0,-7.2 V7.2 M-7.2,0 H7.2 M-6.2,-3.6 H6.2 M-6.2,3.6 H6.2"/></g></g><g transform="translate(876,658.6)"><ellipse cx="0" cy="-.5" rx="8.2" ry="6.5" fill="#666"/><path d="M1.5,5 L7.5,8.3 L5.5,3 Z" fill="#666"/><circle cx="-3.7" cy="-.5" r="1.2" fill="#fff"/><circle cx="0" cy="-.5" r="1.2" fill="#fff"/><circle cx="3.7" cy="-.5" r="1.2" fill="#fff"/></g><g transform="translate(0,0)"><rect x="906.5" y="661" width="1.6" height="1.6" fill="#b8b8b8"/><rect x="906.5" y="664" width="1.6" height="1.6" fill="#b8b8b8"/><rect x="906.5" y="667" width="1.6" height="1.6" fill="#b8b8b8"/><rect x="903.5" y="664" width="1.6" height="1.6" fill="#b8b8b8"/><rect x="903.5" y="667" width="1.6" height="1.6" fill="#b8b8b8"/><rect x="900.5" y="667" width="1.6" height="1.6" fill="#b8b8b8"/></g></svg>
<span class="t" id="t41" style="left:227.5px;top:71.60px;font-size:13px;line-height:15px;color:#505050;letter-spacing:-0.734px;">a</span>
<span class="t" id="t42" style="left:388.3px;top:66.48px;font-size:9px;line-height:11px;color:#c9c9c9;font-weight:bold;letter-spacing:-0.005px;">1:1</span>
<span class="t" id="t43" style="left:199.6px;top:96.90px;font-size:15px;line-height:17px;color:#fff;font-weight:bold;font-family:'Liberation Serif',serif;"><i>i</i></span>
<span class="t" id="t45" style="left:589.4px;top:96.36px;font-size:16px;line-height:18px;color:#484848;font-weight:bold;letter-spacing:0.328px;font-family:'Liberation Serif',serif;">T</span>
<span class="t" id="t46" style="left:116.6px;top:159.02px;font-size:12.5px;line-height:14px;color:#fff;font-weight:bold;font-family:'Liberation Serif',serif;"><i>i</i></span>
<span class="t" id="t47" style="left:112.3px;top:487.17px;font-size:20px;line-height:22px;color:#666;font-family:'Liberation Serif',serif;">ε</span>
</body>
</html>
